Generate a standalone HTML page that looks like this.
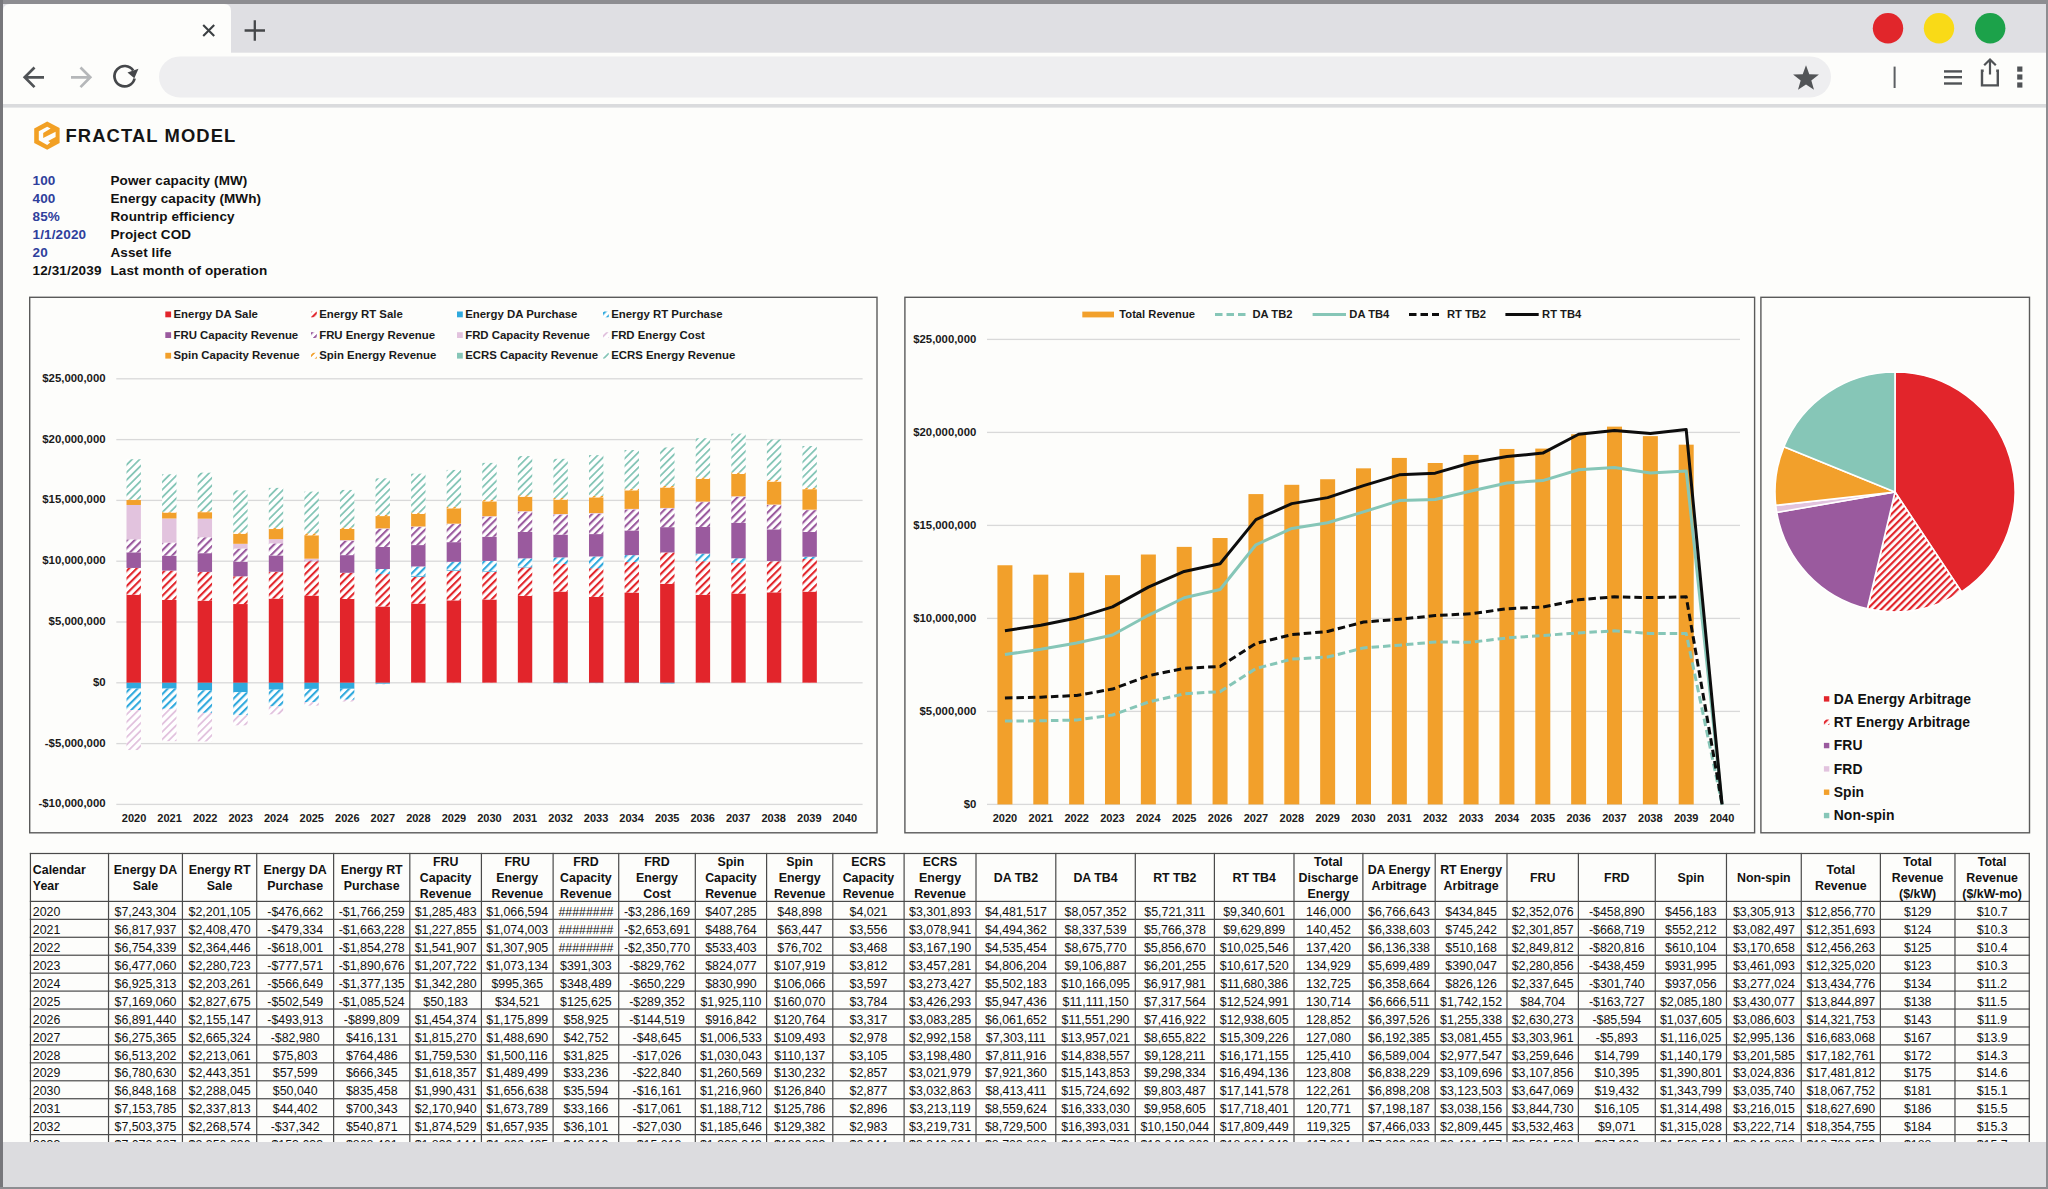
<!DOCTYPE html><html><head><meta charset="utf-8"><style>html,body{margin:0;padding:0;}body{width:2048px;height:1189px;overflow:hidden;position:relative;background:#fdfdfb;font-family:"Liberation Sans", sans-serif;}.a{position:absolute;}svg text{font-family:"Liberation Sans", sans-serif;}</style></head><body><svg class="a" style="left:0;top:0" width="2048" height="110" viewBox="0 0 2048 110"><rect x="0" y="0" width="2048" height="110" fill="#fdfdfb"/><rect x="0" y="0" width="2048" height="52.7" fill="#dfdfe3"/><path d="M3,60 V11 Q3,4 10,4 H224 Q231,4 231,11 V60 Z" fill="#fdfdfb"/><path d="M203.2,25 L214.2,36 M214.2,25 L203.2,36" stroke="#3c4043" stroke-width="2.1" fill="none"/><path d="M254.8,20.3 V40.7 M244.6,30.5 H265" stroke="#45474a" stroke-width="2.3" fill="none"/><circle cx="1888" cy="28.2" r="15.2" fill="#e1262b"/><circle cx="1939" cy="28.2" r="15.2" fill="#f9da17"/><circle cx="1990.2" cy="28.2" r="15.2" fill="#1ca24a"/><rect x="159" y="56.4" width="1672" height="41" rx="20.5" fill="#eeeef0"/><rect x="0" y="104" width="2048" height="3.6" fill="#dadbdd"/><path d="M44,77.3 H26.5 M34.5,67.5 L24.7,77.3 L34.5,87.1" stroke="#505356" stroke-width="2.7" fill="none"/><path d="M71,77.3 H88.5 M80.5,67.5 L90.3,77.3 L80.5,87.1" stroke="#b5b7b9" stroke-width="2.7" fill="none"/><path d="M133.2,70.6 A10.2,10.2 0 1 0 134.6,78.5" stroke="#45474a" stroke-width="2.7" fill="none"/><path d="M127.5,72.5 L138.5,68.7 L134.3,78.2 Z" fill="#45474a"/><polygon points="1806,65.2 1809.29,74.27 1818.93,74.6 1811.33,80.53 1813.99,89.8 1806,84.4 1798.01,89.8 1800.67,80.53 1793.07,74.6 1802.71,74.27" fill="#525457"/><rect x="1893.6" y="66.6" width="2" height="21.4" fill="#5c5f63"/><rect x="1944" y="70.2" width="18" height="2.4" fill="#505356"/><rect x="1944" y="76" width="18" height="2.4" fill="#505356"/><rect x="1944" y="82.3" width="18" height="2.4" fill="#505356"/><path d="M1983.7,70.8 H1982 V85.4 H1997.8 V70.8 H1996.2" stroke="#505356" stroke-width="2.4" fill="none"/><path d="M1990,74.5 V59.8 M1984.2,65.3 L1990,59.5 L1995.8,65.3" stroke="#505356" stroke-width="2.2" fill="none"/><rect x="2017.2" y="66.5" width="5.2" height="5.2" fill="#505356"/><rect x="2017.2" y="74.4" width="5.2" height="5.2" fill="#505356"/><rect x="2017.2" y="82.4" width="5.2" height="5.2" fill="#505356"/></svg><svg class="a" style="left:28px;top:116px" width="40" height="40" viewBox="0 0 40 40"><polygon points="19.2,5.4 31.6,12.1 31.6,26.9 19.2,33.8 6.2,26.9 6.2,12.5" fill="#f2a024"/><polygon points="19.2,10.8 22.6,12.6 15.2,16.9 15.2,21.9 27.6,15.8 27.6,20.9 20.2,24.9 22.2,26.6 19.2,29 10.8,24.2 10.8,15.2" fill="#fdfdfb"/></svg><div class="a" style="left:65.5px;top:122.8px;font-size:18.4px;font-weight:bold;letter-spacing:1.1px;color:#151515;line-height:26px;white-space:nowrap">FRACTAL MODEL</div><div class="a" style="left:32.5px;top:171.9px;font-size:13.5px;letter-spacing:0.15px;font-weight:bold;color:#2f3f9c;line-height:18px;white-space:nowrap">100</div><div class="a" style="left:110.5px;top:171.9px;font-size:13.5px;letter-spacing:0.1px;font-weight:bold;color:#111;line-height:18px;white-space:nowrap">Power capacity (MW)</div><div class="a" style="left:32.5px;top:189.85px;font-size:13.5px;letter-spacing:0.15px;font-weight:bold;color:#2f3f9c;line-height:18px;white-space:nowrap">400</div><div class="a" style="left:110.5px;top:189.85px;font-size:13.5px;letter-spacing:0.1px;font-weight:bold;color:#111;line-height:18px;white-space:nowrap">Energy capacity (MWh)</div><div class="a" style="left:32.5px;top:207.8px;font-size:13.5px;letter-spacing:0.15px;font-weight:bold;color:#2f3f9c;line-height:18px;white-space:nowrap">85%</div><div class="a" style="left:110.5px;top:207.8px;font-size:13.5px;letter-spacing:0.1px;font-weight:bold;color:#111;line-height:18px;white-space:nowrap">Rountrip efficiency</div><div class="a" style="left:32.5px;top:225.75px;font-size:13.5px;letter-spacing:0.15px;font-weight:bold;color:#2f3f9c;line-height:18px;white-space:nowrap">1/1/2020</div><div class="a" style="left:110.5px;top:225.75px;font-size:13.5px;letter-spacing:0.1px;font-weight:bold;color:#111;line-height:18px;white-space:nowrap">Project COD</div><div class="a" style="left:32.5px;top:243.7px;font-size:13.5px;letter-spacing:0.15px;font-weight:bold;color:#2f3f9c;line-height:18px;white-space:nowrap">20</div><div class="a" style="left:110.5px;top:243.7px;font-size:13.5px;letter-spacing:0.1px;font-weight:bold;color:#111;line-height:18px;white-space:nowrap">Asset life</div><div class="a" style="left:32.5px;top:261.65px;font-size:13.5px;letter-spacing:0.15px;font-weight:bold;color:#111111;line-height:18px;white-space:nowrap">12/31/2039</div><div class="a" style="left:110.5px;top:261.65px;font-size:13.5px;letter-spacing:0.1px;font-weight:bold;color:#111;line-height:18px;white-space:nowrap">Last month of operation</div><svg class="a" style="left:0;top:0" width="2048" height="850" viewBox="0 0 2048 850"><defs><pattern id="he2252b" patternUnits="userSpaceOnUse" width="5.35" height="5.35" patternTransform="rotate(45)"><rect width="5.35" height="5.35" fill="#ffffff"/><rect width="2.1" height="5.35" fill="#e2252b"/></pattern><pattern id="h2fa9dd" patternUnits="userSpaceOnUse" width="5.35" height="5.35" patternTransform="rotate(45)"><rect width="5.35" height="5.35" fill="#ffffff"/><rect width="2.1" height="5.35" fill="#2fa9dd"/></pattern><pattern id="h9a5a9e" patternUnits="userSpaceOnUse" width="5.35" height="5.35" patternTransform="rotate(45)"><rect width="5.35" height="5.35" fill="#ffffff"/><rect width="2.1" height="5.35" fill="#9a5a9e"/></pattern><pattern id="he2c3de" patternUnits="userSpaceOnUse" width="5.35" height="5.35" patternTransform="rotate(45)"><rect width="5.35" height="5.35" fill="#ffffff"/><rect width="1.8" height="5.35" fill="#e2c3de"/></pattern><pattern id="hf2a02b" patternUnits="userSpaceOnUse" width="5.35" height="5.35" patternTransform="rotate(45)"><rect width="5.35" height="5.35" fill="#ffffff"/><rect width="1.8" height="5.35" fill="#f2a02b"/></pattern><pattern id="h86c6b7" patternUnits="userSpaceOnUse" width="5.35" height="5.35" patternTransform="rotate(45)"><rect width="5.35" height="5.35" fill="#ffffff"/><rect width="1.8" height="5.35" fill="#86c6b7"/></pattern></defs><rect x="29.7" y="297.3" width="847.3" height="535.5" fill="none" stroke="#5a5a5a" stroke-width="1.4"/><rect x="116.3" y="803.75" width="746.3" height="1.3" fill="#d9d9d9"/><text x="105.6" y="807.4" text-anchor="end" font-size="11.4" font-weight="bold" fill="#1a1a1a">-$10,000,000</text><rect x="116.3" y="742.95" width="746.3" height="1.3" fill="#d9d9d9"/><text x="105.6" y="746.6" text-anchor="end" font-size="11.4" font-weight="bold" fill="#1a1a1a">-$5,000,000</text><rect x="116.3" y="682.15" width="746.3" height="1.3" fill="#d9d9d9"/><text x="105.6" y="685.8" text-anchor="end" font-size="11.4" font-weight="bold" fill="#1a1a1a">$0</text><rect x="116.3" y="621.35" width="746.3" height="1.3" fill="#d9d9d9"/><text x="105.6" y="625" text-anchor="end" font-size="11.4" font-weight="bold" fill="#1a1a1a">$5,000,000</text><rect x="116.3" y="560.55" width="746.3" height="1.3" fill="#d9d9d9"/><text x="105.6" y="564.2" text-anchor="end" font-size="11.4" font-weight="bold" fill="#1a1a1a">$10,000,000</text><rect x="116.3" y="499.75" width="746.3" height="1.3" fill="#d9d9d9"/><text x="105.6" y="503.4" text-anchor="end" font-size="11.4" font-weight="bold" fill="#1a1a1a">$15,000,000</text><rect x="116.3" y="438.95" width="746.3" height="1.3" fill="#d9d9d9"/><text x="105.6" y="442.6" text-anchor="end" font-size="11.4" font-weight="bold" fill="#1a1a1a">$20,000,000</text><rect x="116.3" y="378.15" width="746.3" height="1.3" fill="#d9d9d9"/><text x="105.6" y="381.8" text-anchor="end" font-size="11.4" font-weight="bold" fill="#1a1a1a">$25,000,000</text><text x="134.07" y="822" text-anchor="middle" font-size="11" font-weight="bold" fill="#1a1a1a">2020</text><text x="169.61" y="822" text-anchor="middle" font-size="11" font-weight="bold" fill="#1a1a1a">2021</text><text x="205.15" y="822" text-anchor="middle" font-size="11" font-weight="bold" fill="#1a1a1a">2022</text><text x="240.68" y="822" text-anchor="middle" font-size="11" font-weight="bold" fill="#1a1a1a">2023</text><text x="276.22" y="822" text-anchor="middle" font-size="11" font-weight="bold" fill="#1a1a1a">2024</text><text x="311.76" y="822" text-anchor="middle" font-size="11" font-weight="bold" fill="#1a1a1a">2025</text><text x="347.3" y="822" text-anchor="middle" font-size="11" font-weight="bold" fill="#1a1a1a">2026</text><text x="382.84" y="822" text-anchor="middle" font-size="11" font-weight="bold" fill="#1a1a1a">2027</text><text x="418.37" y="822" text-anchor="middle" font-size="11" font-weight="bold" fill="#1a1a1a">2028</text><text x="453.91" y="822" text-anchor="middle" font-size="11" font-weight="bold" fill="#1a1a1a">2029</text><text x="489.45" y="822" text-anchor="middle" font-size="11" font-weight="bold" fill="#1a1a1a">2030</text><text x="524.99" y="822" text-anchor="middle" font-size="11" font-weight="bold" fill="#1a1a1a">2031</text><text x="560.53" y="822" text-anchor="middle" font-size="11" font-weight="bold" fill="#1a1a1a">2032</text><text x="596.06" y="822" text-anchor="middle" font-size="11" font-weight="bold" fill="#1a1a1a">2033</text><text x="631.6" y="822" text-anchor="middle" font-size="11" font-weight="bold" fill="#1a1a1a">2034</text><text x="667.14" y="822" text-anchor="middle" font-size="11" font-weight="bold" fill="#1a1a1a">2035</text><text x="702.68" y="822" text-anchor="middle" font-size="11" font-weight="bold" fill="#1a1a1a">2036</text><text x="738.22" y="822" text-anchor="middle" font-size="11" font-weight="bold" fill="#1a1a1a">2037</text><text x="773.75" y="822" text-anchor="middle" font-size="11" font-weight="bold" fill="#1a1a1a">2038</text><text x="809.29" y="822" text-anchor="middle" font-size="11" font-weight="bold" fill="#1a1a1a">2039</text><text x="844.83" y="822" text-anchor="middle" font-size="11" font-weight="bold" fill="#1a1a1a">2040</text><rect x="126.5" y="594.72" width="14.4" height="88.08" fill="#e2252b"/><rect x="126.5" y="567.96" width="14.4" height="26.77" fill="url(#he2252b)"/><rect x="126.5" y="682.8" width="14.4" height="5.8" fill="#2fa9dd"/><rect x="126.5" y="688.6" width="14.4" height="21.48" fill="url(#h2fa9dd)"/><rect x="126.5" y="552.32" width="14.4" height="15.63" fill="#9a5a9e"/><rect x="126.5" y="539.35" width="14.4" height="12.97" fill="url(#h9a5a9e)"/><rect x="126.5" y="504.98" width="14.4" height="34.38" fill="#e2c3de"/><rect x="126.5" y="710.07" width="14.4" height="39.96" fill="url(#he2c3de)"/><rect x="126.5" y="500.02" width="14.4" height="4.95" fill="#f2a02b"/><rect x="126.5" y="499.43" width="14.4" height="0.59" fill="url(#hf2a02b)"/><rect x="126.5" y="459.23" width="14.4" height="40.15" fill="url(#h86c6b7)"/><rect x="162.08" y="599.89" width="14.4" height="82.91" fill="#e2252b"/><rect x="162.08" y="570.61" width="14.4" height="29.29" fill="url(#he2252b)"/><rect x="162.08" y="682.8" width="14.4" height="5.83" fill="#2fa9dd"/><rect x="162.08" y="688.63" width="14.4" height="20.22" fill="url(#h2fa9dd)"/><rect x="162.08" y="555.68" width="14.4" height="14.93" fill="#9a5a9e"/><rect x="162.08" y="542.62" width="14.4" height="13.06" fill="url(#h9a5a9e)"/><rect x="162.08" y="518.48" width="14.4" height="24.14" fill="#e2c3de"/><rect x="162.08" y="708.85" width="14.4" height="32.27" fill="url(#he2c3de)"/><rect x="162.08" y="512.54" width="14.4" height="5.94" fill="#f2a02b"/><rect x="162.08" y="511.76" width="14.4" height="0.77" fill="url(#hf2a02b)"/><rect x="162.08" y="474.28" width="14.4" height="37.44" fill="url(#h86c6b7)"/><rect x="197.65" y="600.67" width="14.4" height="82.13" fill="#e2252b"/><rect x="197.65" y="571.92" width="14.4" height="28.75" fill="url(#he2252b)"/><rect x="197.65" y="682.8" width="14.4" height="7.51" fill="#2fa9dd"/><rect x="197.65" y="690.31" width="14.4" height="22.55" fill="url(#h2fa9dd)"/><rect x="197.65" y="553.17" width="14.4" height="18.75" fill="#9a5a9e"/><rect x="197.65" y="537.26" width="14.4" height="15.9" fill="url(#h9a5a9e)"/><rect x="197.65" y="518.66" width="14.4" height="18.6" fill="#e2c3de"/><rect x="197.65" y="712.86" width="14.4" height="28.59" fill="url(#he2c3de)"/><rect x="197.65" y="512.17" width="14.4" height="6.49" fill="#f2a02b"/><rect x="197.65" y="511.24" width="14.4" height="0.93" fill="url(#hf2a02b)"/><rect x="197.65" y="472.68" width="14.4" height="38.51" fill="url(#h86c6b7)"/><rect x="233.23" y="604.04" width="14.4" height="78.76" fill="#e2252b"/><rect x="233.23" y="576.31" width="14.4" height="27.73" fill="url(#he2252b)"/><rect x="233.23" y="682.8" width="14.4" height="9.46" fill="#2fa9dd"/><rect x="233.23" y="692.26" width="14.4" height="22.99" fill="url(#h2fa9dd)"/><rect x="233.23" y="561.62" width="14.4" height="14.69" fill="#9a5a9e"/><rect x="233.23" y="548.57" width="14.4" height="13.05" fill="url(#h9a5a9e)"/><rect x="233.23" y="543.81" width="14.4" height="4.76" fill="#e2c3de"/><rect x="233.23" y="715.25" width="14.4" height="10.09" fill="url(#he2c3de)"/><rect x="233.23" y="533.79" width="14.4" height="10.02" fill="#f2a02b"/><rect x="233.23" y="532.48" width="14.4" height="1.31" fill="url(#hf2a02b)"/><rect x="233.23" y="490.39" width="14.4" height="42.04" fill="url(#h86c6b7)"/><rect x="268.8" y="598.59" width="14.4" height="84.21" fill="#e2252b"/><rect x="268.8" y="571.8" width="14.4" height="26.79" fill="url(#he2252b)"/><rect x="268.8" y="682.8" width="14.4" height="6.89" fill="#2fa9dd"/><rect x="268.8" y="689.69" width="14.4" height="16.75" fill="url(#h2fa9dd)"/><rect x="268.8" y="555.47" width="14.4" height="16.32" fill="#9a5a9e"/><rect x="268.8" y="543.37" width="14.4" height="12.1" fill="url(#h9a5a9e)"/><rect x="268.8" y="539.13" width="14.4" height="4.24" fill="#e2c3de"/><rect x="268.8" y="706.44" width="14.4" height="7.91" fill="url(#he2c3de)"/><rect x="268.8" y="529.03" width="14.4" height="10.1" fill="#f2a02b"/><rect x="268.8" y="527.74" width="14.4" height="1.29" fill="url(#hf2a02b)"/><rect x="268.8" y="487.89" width="14.4" height="39.8" fill="url(#h86c6b7)"/><rect x="304.38" y="595.62" width="14.4" height="87.18" fill="#e2252b"/><rect x="304.38" y="561.24" width="14.4" height="34.38" fill="url(#he2252b)"/><rect x="304.38" y="682.8" width="14.4" height="6.11" fill="#2fa9dd"/><rect x="304.38" y="688.91" width="14.4" height="13.2" fill="url(#h2fa9dd)"/><rect x="304.38" y="560.63" width="14.4" height="0.61" fill="#9a5a9e"/><rect x="304.38" y="560.21" width="14.4" height="0.42" fill="url(#h9a5a9e)"/><rect x="304.38" y="558.68" width="14.4" height="1.53" fill="#e2c3de"/><rect x="304.38" y="702.11" width="14.4" height="3.52" fill="url(#he2c3de)"/><rect x="304.38" y="535.27" width="14.4" height="23.41" fill="#f2a02b"/><rect x="304.38" y="533.33" width="14.4" height="1.95" fill="url(#hf2a02b)"/><rect x="304.38" y="491.62" width="14.4" height="41.66" fill="url(#h86c6b7)"/><rect x="339.96" y="599" width="14.4" height="83.8" fill="#e2252b"/><rect x="339.96" y="572.79" width="14.4" height="26.21" fill="url(#he2252b)"/><rect x="339.96" y="682.8" width="14.4" height="6.01" fill="#2fa9dd"/><rect x="339.96" y="688.81" width="14.4" height="10.94" fill="url(#h2fa9dd)"/><rect x="339.96" y="555.11" width="14.4" height="17.69" fill="#9a5a9e"/><rect x="339.96" y="540.81" width="14.4" height="14.3" fill="url(#h9a5a9e)"/><rect x="339.96" y="540.09" width="14.4" height="0.72" fill="#e2c3de"/><rect x="339.96" y="699.75" width="14.4" height="1.76" fill="url(#he2c3de)"/><rect x="339.96" y="528.94" width="14.4" height="11.15" fill="#f2a02b"/><rect x="339.96" y="527.48" width="14.4" height="1.47" fill="url(#hf2a02b)"/><rect x="339.96" y="489.94" width="14.4" height="37.49" fill="url(#h86c6b7)"/><rect x="375.53" y="606.49" width="14.4" height="76.31" fill="#e2252b"/><rect x="375.53" y="574.08" width="14.4" height="32.41" fill="url(#he2252b)"/><rect x="375.53" y="682.8" width="14.4" height="1.01" fill="#2fa9dd"/><rect x="375.53" y="569.02" width="14.4" height="5.06" fill="url(#h2fa9dd)"/><rect x="375.53" y="546.95" width="14.4" height="22.07" fill="#9a5a9e"/><rect x="375.53" y="528.84" width="14.4" height="18.1" fill="url(#h9a5a9e)"/><rect x="375.53" y="528.33" width="14.4" height="0.52" fill="#e2c3de"/><rect x="375.53" y="683.81" width="14.4" height="0.59" fill="url(#he2c3de)"/><rect x="375.53" y="516.09" width="14.4" height="12.24" fill="#f2a02b"/><rect x="375.53" y="514.75" width="14.4" height="1.33" fill="url(#hf2a02b)"/><rect x="375.53" y="478.33" width="14.4" height="36.38" fill="url(#h86c6b7)"/><rect x="411.11" y="603.6" width="14.4" height="79.2" fill="#e2252b"/><rect x="411.11" y="576.69" width="14.4" height="26.91" fill="url(#he2252b)"/><rect x="411.11" y="575.77" width="14.4" height="0.92" fill="#2fa9dd"/><rect x="411.11" y="566.47" width="14.4" height="9.3" fill="url(#h2fa9dd)"/><rect x="411.11" y="545.07" width="14.4" height="21.4" fill="#9a5a9e"/><rect x="411.11" y="526.83" width="14.4" height="18.24" fill="url(#h9a5a9e)"/><rect x="411.11" y="526.45" width="14.4" height="0.39" fill="#e2c3de"/><rect x="411.11" y="682.8" width="14.4" height="0.21" fill="url(#he2c3de)"/><rect x="411.11" y="513.92" width="14.4" height="12.53" fill="#f2a02b"/><rect x="411.11" y="512.58" width="14.4" height="1.34" fill="url(#hf2a02b)"/><rect x="411.11" y="473.65" width="14.4" height="38.89" fill="url(#h86c6b7)"/><rect x="446.68" y="600.35" width="14.4" height="82.45" fill="#e2252b"/><rect x="446.68" y="570.64" width="14.4" height="29.71" fill="url(#he2252b)"/><rect x="446.68" y="569.94" width="14.4" height="0.7" fill="#2fa9dd"/><rect x="446.68" y="561.83" width="14.4" height="8.1" fill="url(#h2fa9dd)"/><rect x="446.68" y="542.15" width="14.4" height="19.68" fill="#9a5a9e"/><rect x="446.68" y="524.04" width="14.4" height="18.11" fill="url(#h9a5a9e)"/><rect x="446.68" y="523.64" width="14.4" height="0.4" fill="#e2c3de"/><rect x="446.68" y="682.8" width="14.4" height="0.28" fill="url(#he2c3de)"/><rect x="446.68" y="508.31" width="14.4" height="15.33" fill="#f2a02b"/><rect x="446.68" y="506.73" width="14.4" height="1.58" fill="url(#hf2a02b)"/><rect x="446.68" y="469.94" width="14.4" height="36.75" fill="url(#h86c6b7)"/><rect x="482.26" y="599.53" width="14.4" height="83.27" fill="#e2252b"/><rect x="482.26" y="571.7" width="14.4" height="27.82" fill="url(#he2252b)"/><rect x="482.26" y="571.1" width="14.4" height="0.61" fill="#2fa9dd"/><rect x="482.26" y="560.94" width="14.4" height="10.16" fill="url(#h2fa9dd)"/><rect x="482.26" y="536.73" width="14.4" height="24.2" fill="#9a5a9e"/><rect x="482.26" y="516.59" width="14.4" height="20.14" fill="url(#h9a5a9e)"/><rect x="482.26" y="516.15" width="14.4" height="0.43" fill="#e2c3de"/><rect x="482.26" y="682.8" width="14.4" height="0.2" fill="url(#he2c3de)"/><rect x="482.26" y="501.36" width="14.4" height="14.8" fill="#f2a02b"/><rect x="482.26" y="499.81" width="14.4" height="1.54" fill="url(#hf2a02b)"/><rect x="482.26" y="462.9" width="14.4" height="36.88" fill="url(#h86c6b7)"/><rect x="517.84" y="595.81" width="14.4" height="86.99" fill="#e2252b"/><rect x="517.84" y="567.38" width="14.4" height="28.43" fill="url(#he2252b)"/><rect x="517.84" y="566.84" width="14.4" height="0.54" fill="#2fa9dd"/><rect x="517.84" y="558.33" width="14.4" height="8.52" fill="url(#h2fa9dd)"/><rect x="517.84" y="531.93" width="14.4" height="26.4" fill="#9a5a9e"/><rect x="517.84" y="511.57" width="14.4" height="20.35" fill="url(#h9a5a9e)"/><rect x="517.84" y="511.17" width="14.4" height="0.4" fill="#e2c3de"/><rect x="517.84" y="682.8" width="14.4" height="0.21" fill="url(#he2c3de)"/><rect x="517.84" y="496.72" width="14.4" height="14.45" fill="#f2a02b"/><rect x="517.84" y="495.19" width="14.4" height="1.53" fill="url(#hf2a02b)"/><rect x="517.84" y="456.08" width="14.4" height="39.07" fill="url(#h86c6b7)"/><rect x="553.41" y="591.56" width="14.4" height="91.24" fill="#e2252b"/><rect x="553.41" y="563.97" width="14.4" height="27.59" fill="url(#he2252b)"/><rect x="553.41" y="682.8" width="14.4" height="0.45" fill="#2fa9dd"/><rect x="553.41" y="557.4" width="14.4" height="6.58" fill="url(#h2fa9dd)"/><rect x="553.41" y="534.6" width="14.4" height="22.79" fill="#9a5a9e"/><rect x="553.41" y="514.44" width="14.4" height="20.16" fill="url(#h9a5a9e)"/><rect x="553.41" y="514" width="14.4" height="0.44" fill="#e2c3de"/><rect x="553.41" y="683.25" width="14.4" height="0.33" fill="url(#he2c3de)"/><rect x="553.41" y="499.58" width="14.4" height="14.42" fill="#f2a02b"/><rect x="553.41" y="498.01" width="14.4" height="1.57" fill="url(#hf2a02b)"/><rect x="553.41" y="458.82" width="14.4" height="39.15" fill="url(#h86c6b7)"/><rect x="588.99" y="596.83" width="14.4" height="85.97" fill="#e2252b"/><rect x="588.99" y="568.25" width="14.4" height="28.58" fill="url(#he2252b)"/><rect x="588.99" y="682.8" width="14.4" height="0.24" fill="#2fa9dd"/><rect x="588.99" y="556.46" width="14.4" height="11.8" fill="url(#h2fa9dd)"/><rect x="588.99" y="534.08" width="14.4" height="22.37" fill="#9a5a9e"/><rect x="588.99" y="513.53" width="14.4" height="20.55" fill="url(#h9a5a9e)"/><rect x="588.99" y="513.05" width="14.4" height="0.49" fill="#e2c3de"/><rect x="588.99" y="683.04" width="14.4" height="0.18" fill="url(#he2c3de)"/><rect x="588.99" y="497.36" width="14.4" height="15.69" fill="#f2a02b"/><rect x="588.99" y="495.78" width="14.4" height="1.58" fill="url(#hf2a02b)"/><rect x="588.99" y="455.13" width="14.4" height="40.61" fill="url(#h86c6b7)"/><rect x="624.56" y="592.57" width="14.4" height="90.23" fill="#e2252b"/><rect x="624.56" y="562.05" width="14.4" height="30.52" fill="url(#he2252b)"/><rect x="624.56" y="682.8" width="14.4" height="0.24" fill="#2fa9dd"/><rect x="624.56" y="555.12" width="14.4" height="6.93" fill="url(#h2fa9dd)"/><rect x="624.56" y="530.44" width="14.4" height="24.68" fill="#9a5a9e"/><rect x="624.56" y="509.4" width="14.4" height="21.04" fill="url(#h9a5a9e)"/><rect x="624.56" y="508.91" width="14.4" height="0.49" fill="#e2c3de"/><rect x="624.56" y="683.04" width="14.4" height="0.18" fill="url(#he2c3de)"/><rect x="624.56" y="490.31" width="14.4" height="18.6" fill="#f2a02b"/><rect x="624.56" y="488.73" width="14.4" height="1.58" fill="url(#hf2a02b)"/><rect x="624.56" y="450.02" width="14.4" height="38.67" fill="url(#h86c6b7)"/><rect x="660.14" y="583.82" width="14.4" height="98.98" fill="#e2252b"/><rect x="660.14" y="552.44" width="14.4" height="31.37" fill="url(#he2252b)"/><rect x="660.14" y="682.8" width="14.4" height="0.73" fill="#2fa9dd"/><rect x="660.14" y="527.15" width="14.4" height="25.29" fill="#9a5a9e"/><rect x="660.14" y="508.43" width="14.4" height="18.73" fill="url(#h9a5a9e)"/><rect x="660.14" y="507.94" width="14.4" height="0.49" fill="#e2c3de"/><rect x="660.14" y="683.53" width="14.4" height="0.18" fill="url(#he2c3de)"/><rect x="660.14" y="487.51" width="14.4" height="20.43" fill="#f2a02b"/><rect x="660.14" y="485.93" width="14.4" height="1.58" fill="url(#hf2a02b)"/><rect x="660.14" y="447.47" width="14.4" height="38.43" fill="url(#h86c6b7)"/><rect x="695.72" y="594.76" width="14.4" height="88.04" fill="#e2252b"/><rect x="695.72" y="561.2" width="14.4" height="33.56" fill="url(#he2252b)"/><rect x="695.72" y="561.08" width="14.4" height="0.12" fill="#2fa9dd"/><rect x="695.72" y="553.66" width="14.4" height="7.42" fill="url(#h2fa9dd)"/><rect x="695.72" y="526.91" width="14.4" height="26.75" fill="#9a5a9e"/><rect x="695.72" y="502.1" width="14.4" height="24.81" fill="url(#h9a5a9e)"/><rect x="695.72" y="501.62" width="14.4" height="0.49" fill="#e2c3de"/><rect x="695.72" y="682.8" width="14.4" height="0.18" fill="url(#he2c3de)"/><rect x="695.72" y="478.88" width="14.4" height="22.74" fill="#f2a02b"/><rect x="695.72" y="477.3" width="14.4" height="1.58" fill="url(#hf2a02b)"/><rect x="695.72" y="438.23" width="14.4" height="39.03" fill="url(#h86c6b7)"/><rect x="731.29" y="593.55" width="14.4" height="89.25" fill="#e2252b"/><rect x="731.29" y="563.02" width="14.4" height="30.52" fill="url(#he2252b)"/><rect x="731.29" y="562.9" width="14.4" height="0.12" fill="#2fa9dd"/><rect x="731.29" y="558.28" width="14.4" height="4.62" fill="url(#h2fa9dd)"/><rect x="731.29" y="522.77" width="14.4" height="35.51" fill="#9a5a9e"/><rect x="731.29" y="496.75" width="14.4" height="26.02" fill="url(#h9a5a9e)"/><rect x="731.29" y="496.27" width="14.4" height="0.49" fill="#e2c3de"/><rect x="731.29" y="682.8" width="14.4" height="0.18" fill="url(#he2c3de)"/><rect x="731.29" y="474.01" width="14.4" height="22.25" fill="#f2a02b"/><rect x="731.29" y="472.43" width="14.4" height="1.58" fill="url(#hf2a02b)"/><rect x="731.29" y="433.61" width="14.4" height="38.79" fill="url(#h86c6b7)"/><rect x="766.87" y="592.33" width="14.4" height="90.47" fill="#e2252b"/><rect x="766.87" y="561.32" width="14.4" height="31.01" fill="url(#he2252b)"/><rect x="766.87" y="561.08" width="14.4" height="0.24" fill="url(#h2fa9dd)"/><rect x="766.87" y="529.34" width="14.4" height="31.74" fill="#9a5a9e"/><rect x="766.87" y="505.02" width="14.4" height="24.32" fill="url(#h9a5a9e)"/><rect x="766.87" y="504.53" width="14.4" height="0.49" fill="#e2c3de"/><rect x="766.87" y="682.8" width="14.4" height="0.18" fill="url(#he2c3de)"/><rect x="766.87" y="481.55" width="14.4" height="22.98" fill="#f2a02b"/><rect x="766.87" y="479.97" width="14.4" height="1.58" fill="url(#hf2a02b)"/><rect x="766.87" y="439.56" width="14.4" height="40.37" fill="url(#h86c6b7)"/><rect x="802.44" y="591.6" width="14.4" height="91.2" fill="#e2252b"/><rect x="802.44" y="559.01" width="14.4" height="32.59" fill="url(#he2252b)"/><rect x="802.44" y="556.7" width="14.4" height="2.31" fill="url(#h2fa9dd)"/><rect x="802.44" y="531.89" width="14.4" height="24.81" fill="#9a5a9e"/><rect x="802.44" y="510.13" width="14.4" height="21.77" fill="url(#h9a5a9e)"/><rect x="802.44" y="509.64" width="14.4" height="0.49" fill="#e2c3de"/><rect x="802.44" y="682.8" width="14.4" height="0.18" fill="url(#he2c3de)"/><rect x="802.44" y="489.21" width="14.4" height="20.43" fill="#f2a02b"/><rect x="802.44" y="487.63" width="14.4" height="1.58" fill="url(#hf2a02b)"/><rect x="802.44" y="446.01" width="14.4" height="41.59" fill="url(#h86c6b7)"/><rect x="165.3" y="311.5" width="5.8" height="5.8" fill="#e2252b"/><text x="173.5" y="318" font-size="11.4" font-weight="bold" fill="#1a1a1a">Energy DA Sale</text><rect x="311" y="311.5" width="5.8" height="5.8" fill="url(#he2252b)"/><text x="319.2" y="318" font-size="11.4" font-weight="bold" fill="#1a1a1a">Energy RT Sale</text><rect x="457" y="311.5" width="5.8" height="5.8" fill="#2fa9dd"/><text x="465.2" y="318" font-size="11.4" font-weight="bold" fill="#1a1a1a">Energy DA Purchase</text><rect x="603" y="311.5" width="5.8" height="5.8" fill="url(#h2fa9dd)"/><text x="611.2" y="318" font-size="11.4" font-weight="bold" fill="#1a1a1a">Energy RT Purchase</text><rect x="165.3" y="332.2" width="5.8" height="5.8" fill="#9a5a9e"/><text x="173.5" y="338.7" font-size="11.4" font-weight="bold" fill="#1a1a1a">FRU Capacity Revenue</text><rect x="311" y="332.2" width="5.8" height="5.8" fill="url(#h9a5a9e)"/><text x="319.2" y="338.7" font-size="11.4" font-weight="bold" fill="#1a1a1a">FRU Energy Revenue</text><rect x="457" y="332.2" width="5.8" height="5.8" fill="#e2c3de"/><text x="465.2" y="338.7" font-size="11.4" font-weight="bold" fill="#1a1a1a">FRD Capacity Revenue</text><rect x="603" y="332.2" width="5.8" height="5.8" fill="url(#he2c3de)"/><text x="611.2" y="338.7" font-size="11.4" font-weight="bold" fill="#1a1a1a">FRD Energy Cost</text><rect x="165.3" y="352.8" width="5.8" height="5.8" fill="#f2a02b"/><text x="173.5" y="359.3" font-size="11.4" font-weight="bold" fill="#1a1a1a">Spin Capacity Revenue</text><rect x="311" y="352.8" width="5.8" height="5.8" fill="url(#hf2a02b)"/><text x="319.2" y="359.3" font-size="11.4" font-weight="bold" fill="#1a1a1a">Spin Energy Revenue</text><rect x="457" y="352.8" width="5.8" height="5.8" fill="#86c6b7"/><text x="465.2" y="359.3" font-size="11.4" font-weight="bold" fill="#1a1a1a">ECRS Capacity Revenue</text><rect x="603" y="352.8" width="5.8" height="5.8" fill="url(#h86c6b7)"/><text x="611.2" y="359.3" font-size="11.4" font-weight="bold" fill="#1a1a1a">ECRS Energy Revenue</text></svg><svg class="a" style="left:0;top:0" width="2048" height="850" viewBox="0 0 2048 850"><rect x="904.9" y="297.3" width="849.7" height="535.5" fill="none" stroke="#5a5a5a" stroke-width="1.4"/><rect x="987" y="803.75" width="753" height="1.3" fill="#d9d9d9"/><text x="976.3" y="807.5" text-anchor="end" font-size="11.35" font-weight="bold" fill="#1a1a1a">$0</text><rect x="987" y="710.75" width="753" height="1.3" fill="#d9d9d9"/><text x="976.3" y="714.5" text-anchor="end" font-size="11.35" font-weight="bold" fill="#1a1a1a">$5,000,000</text><rect x="987" y="617.75" width="753" height="1.3" fill="#d9d9d9"/><text x="976.3" y="621.5" text-anchor="end" font-size="11.35" font-weight="bold" fill="#1a1a1a">$10,000,000</text><rect x="987" y="524.75" width="753" height="1.3" fill="#d9d9d9"/><text x="976.3" y="528.5" text-anchor="end" font-size="11.35" font-weight="bold" fill="#1a1a1a">$15,000,000</text><rect x="987" y="431.75" width="753" height="1.3" fill="#d9d9d9"/><text x="976.3" y="435.5" text-anchor="end" font-size="11.35" font-weight="bold" fill="#1a1a1a">$20,000,000</text><rect x="987" y="338.75" width="753" height="1.3" fill="#d9d9d9"/><text x="976.3" y="342.5" text-anchor="end" font-size="11.35" font-weight="bold" fill="#1a1a1a">$25,000,000</text><text x="1004.93" y="821.6" text-anchor="middle" font-size="11" font-weight="bold" fill="#1a1a1a">2020</text><text x="1040.79" y="821.6" text-anchor="middle" font-size="11" font-weight="bold" fill="#1a1a1a">2021</text><text x="1076.64" y="821.6" text-anchor="middle" font-size="11" font-weight="bold" fill="#1a1a1a">2022</text><text x="1112.5" y="821.6" text-anchor="middle" font-size="11" font-weight="bold" fill="#1a1a1a">2023</text><text x="1148.36" y="821.6" text-anchor="middle" font-size="11" font-weight="bold" fill="#1a1a1a">2024</text><text x="1184.21" y="821.6" text-anchor="middle" font-size="11" font-weight="bold" fill="#1a1a1a">2025</text><text x="1220.07" y="821.6" text-anchor="middle" font-size="11" font-weight="bold" fill="#1a1a1a">2026</text><text x="1255.93" y="821.6" text-anchor="middle" font-size="11" font-weight="bold" fill="#1a1a1a">2027</text><text x="1291.79" y="821.6" text-anchor="middle" font-size="11" font-weight="bold" fill="#1a1a1a">2028</text><text x="1327.64" y="821.6" text-anchor="middle" font-size="11" font-weight="bold" fill="#1a1a1a">2029</text><text x="1363.5" y="821.6" text-anchor="middle" font-size="11" font-weight="bold" fill="#1a1a1a">2030</text><text x="1399.36" y="821.6" text-anchor="middle" font-size="11" font-weight="bold" fill="#1a1a1a">2031</text><text x="1435.21" y="821.6" text-anchor="middle" font-size="11" font-weight="bold" fill="#1a1a1a">2032</text><text x="1471.07" y="821.6" text-anchor="middle" font-size="11" font-weight="bold" fill="#1a1a1a">2033</text><text x="1506.93" y="821.6" text-anchor="middle" font-size="11" font-weight="bold" fill="#1a1a1a">2034</text><text x="1542.79" y="821.6" text-anchor="middle" font-size="11" font-weight="bold" fill="#1a1a1a">2035</text><text x="1578.64" y="821.6" text-anchor="middle" font-size="11" font-weight="bold" fill="#1a1a1a">2036</text><text x="1614.5" y="821.6" text-anchor="middle" font-size="11" font-weight="bold" fill="#1a1a1a">2037</text><text x="1650.36" y="821.6" text-anchor="middle" font-size="11" font-weight="bold" fill="#1a1a1a">2038</text><text x="1686.21" y="821.6" text-anchor="middle" font-size="11" font-weight="bold" fill="#1a1a1a">2039</text><text x="1722.07" y="821.6" text-anchor="middle" font-size="11" font-weight="bold" fill="#1a1a1a">2040</text><rect x="997.43" y="565.26" width="15" height="239.14" fill="#f2a02b"/><rect x="1033.29" y="574.66" width="15" height="229.74" fill="#f2a02b"/><rect x="1069.14" y="572.71" width="15" height="231.69" fill="#f2a02b"/><rect x="1105" y="575.15" width="15" height="229.25" fill="#f2a02b"/><rect x="1140.86" y="554.51" width="15" height="249.89" fill="#f2a02b"/><rect x="1176.71" y="546.88" width="15" height="257.52" fill="#f2a02b"/><rect x="1212.57" y="538.02" width="15" height="266.38" fill="#f2a02b"/><rect x="1248.43" y="494.09" width="15" height="310.31" fill="#f2a02b"/><rect x="1284.29" y="484.8" width="15" height="319.6" fill="#f2a02b"/><rect x="1320.14" y="479.24" width="15" height="325.16" fill="#f2a02b"/><rect x="1356" y="468.34" width="15" height="336.06" fill="#f2a02b"/><rect x="1391.86" y="457.92" width="15" height="346.48" fill="#f2a02b"/><rect x="1427.71" y="463" width="15" height="341.4" fill="#f2a02b"/><rect x="1463.57" y="454.91" width="15" height="349.49" fill="#f2a02b"/><rect x="1499.43" y="448.95" width="15" height="355.45" fill="#f2a02b"/><rect x="1535.29" y="448.58" width="15" height="355.82" fill="#f2a02b"/><rect x="1571.14" y="434.26" width="15" height="370.14" fill="#f2a02b"/><rect x="1607" y="426.63" width="15" height="377.77" fill="#f2a02b"/><rect x="1642.86" y="436.12" width="15" height="368.28" fill="#f2a02b"/><rect x="1678.71" y="444.68" width="15" height="359.72" fill="#f2a02b"/><polyline points="1004.93,721.04 1040.79,720.8 1076.64,720.04 1112.5,715 1148.36,702.06 1184.21,693.78 1220.07,691.65 1255.93,668.56 1291.79,659.1 1327.64,657.06 1363.5,647.91 1399.36,645.19 1435.21,642.03 1471.07,642.21 1506.93,637.93 1542.79,635.51 1578.64,632.91 1614.5,630.86 1650.36,633.47 1686.21,633.47 1722.07,804.4" fill="none" stroke="#86c6b7" stroke-width="3" stroke-dasharray="7.5,4" stroke-linejoin="round"/><polyline points="1004.93,654.53 1040.79,649.32 1076.64,643.03 1112.5,635.01 1148.36,615.31 1184.21,597.73 1220.07,589.55 1255.93,544.8 1291.79,528.4 1327.64,522.72 1363.5,511.92 1399.36,500.61 1435.21,499.49 1471.07,490.99 1506.93,482.99 1542.79,480.57 1578.64,469.79 1614.5,467.55 1650.36,472.95 1686.21,470.9 1722.07,804.4" fill="none" stroke="#86c6b7" stroke-width="3" stroke-linejoin="round"/><polyline points="1004.93,697.98 1040.79,697.15 1076.64,695.47 1112.5,689.06 1148.36,675.73 1184.21,668.29 1220.07,666.45 1255.93,643.4 1291.79,634.62 1327.64,631.45 1363.5,622.06 1399.36,619.17 1435.21,615.61 1471.07,613.75 1506.93,608.73 1542.79,607.05 1578.64,599.8 1614.5,596.82 1650.36,597.57 1686.21,596.82 1722.07,804.4" fill="none" stroke="#0d0d0d" stroke-width="3" stroke-dasharray="7.5,4" stroke-linejoin="round"/><polyline points="1004.93,630.66 1040.79,625.28 1076.64,617.92 1112.5,606.91 1148.36,587.14 1184.21,571.44 1220.07,563.74 1255.93,519.65 1291.79,503.62 1327.64,497.61 1363.5,485.57 1399.36,474.84 1435.21,473.14 1471.07,462.72 1506.93,456.58 1542.79,453.05 1578.64,434.26 1614.5,430.54 1650.36,433.52 1686.21,429.61 1722.07,804.4" fill="none" stroke="#0d0d0d" stroke-width="3" stroke-linejoin="round"/><rect x="1082.3" y="311.6" width="31.7" height="5.8" fill="#f2a02b"/><text x="1119.3" y="318" font-size="11.2" font-weight="bold" fill="#1a1a1a">Total Revenue</text><path d="M1215,314.5 H1246" stroke="#86c6b7" stroke-width="3" stroke-dasharray="7.5,4"/><text x="1252.5" y="318" font-size="11.2" font-weight="bold" fill="#1a1a1a">DA TB2</text><path d="M1312.6,314.5 H1346" stroke="#86c6b7" stroke-width="3"/><text x="1349.3" y="318" font-size="11.2" font-weight="bold" fill="#1a1a1a">DA TB4</text><path d="M1409,314.5 H1439" stroke="#0d0d0d" stroke-width="3" stroke-dasharray="7.5,4"/><text x="1446.9" y="318" font-size="11.2" font-weight="bold" fill="#1a1a1a">RT TB2</text><path d="M1505.4,314.5 H1538.7" stroke="#0d0d0d" stroke-width="3"/><text x="1542.1" y="318" font-size="11.2" font-weight="bold" fill="#1a1a1a">RT TB4</text></svg><svg class="a" style="left:0;top:0" width="2048" height="850" viewBox="0 0 2048 850"><defs><pattern id="phe2252b" patternUnits="userSpaceOnUse" width="5" height="5" patternTransform="rotate(45)"><rect width="5" height="5" fill="#ffffff"/><rect width="2.2" height="5" fill="#e2252b"/></pattern></defs><rect x="1760.9" y="297.3" width="268.6" height="535.5" fill="none" stroke="#5a5a5a" stroke-width="1.4"/><path d="M1895,492 L1895,372 A120,120 0 0 1 1961.58,591.83 Z" fill="#e2252b" stroke="#ffffff" stroke-width="1.6" stroke-linejoin="round"/><path d="M1895,492 L1961.58,591.83 A120,120 0 0 1 1867.39,608.78 Z" fill="url(#phe2252b)" stroke="#ffffff" stroke-width="1.6" stroke-linejoin="round"/><path d="M1895,492 L1867.39,608.78 A120,120 0 0 1 1776.75,512.43 Z" fill="#9a5a9e" stroke="#ffffff" stroke-width="1.6" stroke-linejoin="round"/><path d="M1895,492 L1776.75,512.43 A120,120 0 0 1 1775.75,505.38 Z" fill="#e2c3de" stroke="#ffffff" stroke-width="1.6" stroke-linejoin="round"/><path d="M1895,492 L1775.75,505.38 A120,120 0 0 1 1783.9,446.66 Z" fill="#f2a02b" stroke="#ffffff" stroke-width="1.6" stroke-linejoin="round"/><path d="M1895,492 L1783.9,446.66 A120,120 0 0 1 1895,372 Z" fill="#86c6b7" stroke="#ffffff" stroke-width="1.6" stroke-linejoin="round"/><rect x="1823.9" y="696.2" width="5.4" height="5.4" fill="#e2252b"/><text x="1833.7" y="703.8" font-size="13.9" font-weight="bold" letter-spacing="0.1" fill="#111">DA Energy Arbitrage</text><rect x="1823.9" y="719.53" width="5.4" height="5.4" fill="url(#phe2252b)"/><text x="1833.7" y="727.13" font-size="13.9" font-weight="bold" letter-spacing="0.1" fill="#111">RT Energy Arbitrage</text><rect x="1823.9" y="742.86" width="5.4" height="5.4" fill="#9a5a9e"/><text x="1833.7" y="750.46" font-size="13.9" font-weight="bold" letter-spacing="0.1" fill="#111">FRU</text><rect x="1823.9" y="766.19" width="5.4" height="5.4" fill="#e2c3de"/><text x="1833.7" y="773.79" font-size="13.9" font-weight="bold" letter-spacing="0.1" fill="#111">FRD</text><rect x="1823.9" y="789.52" width="5.4" height="5.4" fill="#f2a02b"/><text x="1833.7" y="797.12" font-size="13.9" font-weight="bold" letter-spacing="0.1" fill="#111">Spin</text><rect x="1823.9" y="812.85" width="5.4" height="5.4" fill="#86c6b7"/><text x="1833.7" y="820.45" font-size="13.9" font-weight="bold" letter-spacing="0.1" fill="#111">Non-spin</text></svg><svg class="a" style="left:0;top:840px" width="2048" height="301.9" viewBox="0 840 2048 301.9"><rect x="0" y="840" width="2048" height="400" fill="#fdfdfb"/><rect x="29.8" y="852.9" width="1.2" height="298.4" fill="#4a4a4a"/><rect x="107.9" y="852.9" width="1.2" height="298.4" fill="#4a4a4a"/><rect x="181.8" y="852.9" width="1.2" height="298.4" fill="#4a4a4a"/><rect x="256.1" y="852.9" width="1.2" height="298.4" fill="#4a4a4a"/><rect x="333" y="852.9" width="1.2" height="298.4" fill="#4a4a4a"/><rect x="409.2" y="852.9" width="1.2" height="298.4" fill="#4a4a4a"/><rect x="480.8" y="852.9" width="1.2" height="298.4" fill="#4a4a4a"/><rect x="552.5" y="852.9" width="1.2" height="298.4" fill="#4a4a4a"/><rect x="618.1" y="852.9" width="1.2" height="298.4" fill="#4a4a4a"/><rect x="694.7" y="852.9" width="1.2" height="298.4" fill="#4a4a4a"/><rect x="766" y="852.9" width="1.2" height="298.4" fill="#4a4a4a"/><rect x="832.2" y="852.9" width="1.2" height="298.4" fill="#4a4a4a"/><rect x="903.5" y="852.9" width="1.2" height="298.4" fill="#4a4a4a"/><rect x="975.4" y="852.9" width="1.2" height="298.4" fill="#4a4a4a"/><rect x="1055.2" y="852.9" width="1.2" height="298.4" fill="#4a4a4a"/><rect x="1134.7" y="852.9" width="1.2" height="298.4" fill="#4a4a4a"/><rect x="1213.8" y="852.9" width="1.2" height="298.4" fill="#4a4a4a"/><rect x="1293.4" y="852.9" width="1.2" height="298.4" fill="#4a4a4a"/><rect x="1362.3" y="852.9" width="1.2" height="298.4" fill="#4a4a4a"/><rect x="1434.6" y="852.9" width="1.2" height="298.4" fill="#4a4a4a"/><rect x="1506.4" y="852.9" width="1.2" height="298.4" fill="#4a4a4a"/><rect x="1577.8" y="852.9" width="1.2" height="298.4" fill="#4a4a4a"/><rect x="1654.7" y="852.9" width="1.2" height="298.4" fill="#4a4a4a"/><rect x="1725.9" y="852.9" width="1.2" height="298.4" fill="#4a4a4a"/><rect x="1800.7" y="852.9" width="1.2" height="298.4" fill="#4a4a4a"/><rect x="1879.8" y="852.9" width="1.2" height="298.4" fill="#4a4a4a"/><rect x="1954.4" y="852.9" width="1.2" height="298.4" fill="#4a4a4a"/><rect x="2028.7" y="852.9" width="1.2" height="298.4" fill="#4a4a4a"/><rect x="29.8" y="852.9" width="2000.1" height="1.2" fill="#4a4a4a"/><rect x="29.8" y="900.8" width="2000.1" height="1.2" fill="#4a4a4a"/><rect x="29.8" y="918.74" width="2000.1" height="1.2" fill="#4a4a4a"/><rect x="29.8" y="936.68" width="2000.1" height="1.2" fill="#4a4a4a"/><rect x="29.8" y="954.62" width="2000.1" height="1.2" fill="#4a4a4a"/><rect x="29.8" y="972.56" width="2000.1" height="1.2" fill="#4a4a4a"/><rect x="29.8" y="990.5" width="2000.1" height="1.2" fill="#4a4a4a"/><rect x="29.8" y="1008.44" width="2000.1" height="1.2" fill="#4a4a4a"/><rect x="29.8" y="1026.38" width="2000.1" height="1.2" fill="#4a4a4a"/><rect x="29.8" y="1044.32" width="2000.1" height="1.2" fill="#4a4a4a"/><rect x="29.8" y="1062.26" width="2000.1" height="1.2" fill="#4a4a4a"/><rect x="29.8" y="1080.2" width="2000.1" height="1.2" fill="#4a4a4a"/><rect x="29.8" y="1098.14" width="2000.1" height="1.2" fill="#4a4a4a"/><rect x="29.8" y="1116.08" width="2000.1" height="1.2" fill="#4a4a4a"/><rect x="29.8" y="1134.02" width="2000.1" height="1.2" fill="#4a4a4a"/><rect x="29.8" y="1151.96" width="2000.1" height="1.2" fill="#4a4a4a"/><text x="32.8" y="874.4" font-size="12.4" font-weight="bold" fill="#111">Calendar</text><text x="32.8" y="890.3" font-size="12.4" font-weight="bold" fill="#111">Year</text><text x="145.45" y="874.4" text-anchor="middle" font-size="12.4" font-weight="bold" fill="#111">Energy DA</text><text x="145.45" y="890.3" text-anchor="middle" font-size="12.4" font-weight="bold" fill="#111">Sale</text><text x="219.55" y="874.4" text-anchor="middle" font-size="12.4" font-weight="bold" fill="#111">Energy RT</text><text x="219.55" y="890.3" text-anchor="middle" font-size="12.4" font-weight="bold" fill="#111">Sale</text><text x="295.15" y="874.4" text-anchor="middle" font-size="12.4" font-weight="bold" fill="#111">Energy DA</text><text x="295.15" y="890.3" text-anchor="middle" font-size="12.4" font-weight="bold" fill="#111">Purchase</text><text x="371.7" y="874.4" text-anchor="middle" font-size="12.4" font-weight="bold" fill="#111">Energy RT</text><text x="371.7" y="890.3" text-anchor="middle" font-size="12.4" font-weight="bold" fill="#111">Purchase</text><text x="445.6" y="866.45" text-anchor="middle" font-size="12.4" font-weight="bold" fill="#111">FRU</text><text x="445.6" y="882.35" text-anchor="middle" font-size="12.4" font-weight="bold" fill="#111">Capacity</text><text x="445.6" y="898.25" text-anchor="middle" font-size="12.4" font-weight="bold" fill="#111">Revenue</text><text x="517.25" y="866.45" text-anchor="middle" font-size="12.4" font-weight="bold" fill="#111">FRU</text><text x="517.25" y="882.35" text-anchor="middle" font-size="12.4" font-weight="bold" fill="#111">Energy</text><text x="517.25" y="898.25" text-anchor="middle" font-size="12.4" font-weight="bold" fill="#111">Revenue</text><text x="585.9" y="866.45" text-anchor="middle" font-size="12.4" font-weight="bold" fill="#111">FRD</text><text x="585.9" y="882.35" text-anchor="middle" font-size="12.4" font-weight="bold" fill="#111">Capacity</text><text x="585.9" y="898.25" text-anchor="middle" font-size="12.4" font-weight="bold" fill="#111">Revenue</text><text x="657" y="866.45" text-anchor="middle" font-size="12.4" font-weight="bold" fill="#111">FRD</text><text x="657" y="882.35" text-anchor="middle" font-size="12.4" font-weight="bold" fill="#111">Energy</text><text x="657" y="898.25" text-anchor="middle" font-size="12.4" font-weight="bold" fill="#111">Cost</text><text x="730.95" y="866.45" text-anchor="middle" font-size="12.4" font-weight="bold" fill="#111">Spin</text><text x="730.95" y="882.35" text-anchor="middle" font-size="12.4" font-weight="bold" fill="#111">Capacity</text><text x="730.95" y="898.25" text-anchor="middle" font-size="12.4" font-weight="bold" fill="#111">Revenue</text><text x="799.7" y="866.45" text-anchor="middle" font-size="12.4" font-weight="bold" fill="#111">Spin</text><text x="799.7" y="882.35" text-anchor="middle" font-size="12.4" font-weight="bold" fill="#111">Energy</text><text x="799.7" y="898.25" text-anchor="middle" font-size="12.4" font-weight="bold" fill="#111">Revenue</text><text x="868.45" y="866.45" text-anchor="middle" font-size="12.4" font-weight="bold" fill="#111">ECRS</text><text x="868.45" y="882.35" text-anchor="middle" font-size="12.4" font-weight="bold" fill="#111">Capacity</text><text x="868.45" y="898.25" text-anchor="middle" font-size="12.4" font-weight="bold" fill="#111">Revenue</text><text x="940.05" y="866.45" text-anchor="middle" font-size="12.4" font-weight="bold" fill="#111">ECRS</text><text x="940.05" y="882.35" text-anchor="middle" font-size="12.4" font-weight="bold" fill="#111">Energy</text><text x="940.05" y="898.25" text-anchor="middle" font-size="12.4" font-weight="bold" fill="#111">Revenue</text><text x="1015.9" y="882.35" text-anchor="middle" font-size="12.4" font-weight="bold" fill="#111">DA TB2</text><text x="1095.55" y="882.35" text-anchor="middle" font-size="12.4" font-weight="bold" fill="#111">DA TB4</text><text x="1174.85" y="882.35" text-anchor="middle" font-size="12.4" font-weight="bold" fill="#111">RT TB2</text><text x="1254.2" y="882.35" text-anchor="middle" font-size="12.4" font-weight="bold" fill="#111">RT TB4</text><text x="1328.45" y="866.45" text-anchor="middle" font-size="12.4" font-weight="bold" fill="#111">Total</text><text x="1328.45" y="882.35" text-anchor="middle" font-size="12.4" font-weight="bold" fill="#111">Discharge</text><text x="1328.45" y="898.25" text-anchor="middle" font-size="12.4" font-weight="bold" fill="#111">Energy</text><text x="1399.05" y="874.4" text-anchor="middle" font-size="12.4" font-weight="bold" fill="#111">DA Energy</text><text x="1399.05" y="890.3" text-anchor="middle" font-size="12.4" font-weight="bold" fill="#111">Arbitrage</text><text x="1471.1" y="874.4" text-anchor="middle" font-size="12.4" font-weight="bold" fill="#111">RT Energy</text><text x="1471.1" y="890.3" text-anchor="middle" font-size="12.4" font-weight="bold" fill="#111">Arbitrage</text><text x="1542.7" y="882.35" text-anchor="middle" font-size="12.4" font-weight="bold" fill="#111">FRU</text><text x="1616.85" y="882.35" text-anchor="middle" font-size="12.4" font-weight="bold" fill="#111">FRD</text><text x="1690.9" y="882.35" text-anchor="middle" font-size="12.4" font-weight="bold" fill="#111">Spin</text><text x="1763.9" y="882.35" text-anchor="middle" font-size="12.4" font-weight="bold" fill="#111">Non-spin</text><text x="1840.85" y="874.4" text-anchor="middle" font-size="12.4" font-weight="bold" fill="#111">Total</text><text x="1840.85" y="890.3" text-anchor="middle" font-size="12.4" font-weight="bold" fill="#111">Revenue</text><text x="1917.7" y="866.45" text-anchor="middle" font-size="12.4" font-weight="bold" fill="#111">Total</text><text x="1917.7" y="882.35" text-anchor="middle" font-size="12.4" font-weight="bold" fill="#111">Revenue</text><text x="1917.7" y="898.25" text-anchor="middle" font-size="12.4" font-weight="bold" fill="#111">($/kW)</text><text x="1992.15" y="866.45" text-anchor="middle" font-size="12.4" font-weight="bold" fill="#111">Total</text><text x="1992.15" y="882.35" text-anchor="middle" font-size="12.4" font-weight="bold" fill="#111">Revenue</text><text x="1992.15" y="898.25" text-anchor="middle" font-size="12.4" font-weight="bold" fill="#111">($/kW-mo)</text><text x="32.8" y="916" font-size="12.4" fill="#111">2020</text><text x="145.45" y="916" text-anchor="middle" font-size="12.4" fill="#111">$7,243,304</text><text x="219.55" y="916" text-anchor="middle" font-size="12.4" fill="#111">$2,201,105</text><text x="295.15" y="916" text-anchor="middle" font-size="12.4" fill="#111">-$476,662</text><text x="371.7" y="916" text-anchor="middle" font-size="12.4" fill="#111">-$1,766,259</text><text x="445.6" y="916" text-anchor="middle" font-size="12.4" fill="#111">$1,285,483</text><text x="517.25" y="916" text-anchor="middle" font-size="12.4" fill="#111">$1,066,594</text><text x="585.9" y="916" text-anchor="middle" font-size="12.4" fill="#111">########</text><text x="657" y="916" text-anchor="middle" font-size="12.4" fill="#111">-$3,286,169</text><text x="730.95" y="916" text-anchor="middle" font-size="12.4" fill="#111">$407,285</text><text x="799.7" y="916" text-anchor="middle" font-size="12.4" fill="#111">$48,898</text><text x="868.45" y="916" text-anchor="middle" font-size="12.4" fill="#111">$4,021</text><text x="940.05" y="916" text-anchor="middle" font-size="12.4" fill="#111">$3,301,893</text><text x="1015.9" y="916" text-anchor="middle" font-size="12.4" fill="#111">$4,481,517</text><text x="1095.55" y="916" text-anchor="middle" font-size="12.4" fill="#111">$8,057,352</text><text x="1174.85" y="916" text-anchor="middle" font-size="12.4" fill="#111">$5,721,311</text><text x="1254.2" y="916" text-anchor="middle" font-size="12.4" fill="#111">$9,340,601</text><text x="1328.45" y="916" text-anchor="middle" font-size="12.4" fill="#111">146,000</text><text x="1399.05" y="916" text-anchor="middle" font-size="12.4" fill="#111">$6,766,643</text><text x="1471.1" y="916" text-anchor="middle" font-size="12.4" fill="#111">$434,845</text><text x="1542.7" y="916" text-anchor="middle" font-size="12.4" fill="#111">$2,352,076</text><text x="1616.85" y="916" text-anchor="middle" font-size="12.4" fill="#111">-$458,890</text><text x="1690.9" y="916" text-anchor="middle" font-size="12.4" fill="#111">$456,183</text><text x="1763.9" y="916" text-anchor="middle" font-size="12.4" fill="#111">$3,305,913</text><text x="1840.85" y="916" text-anchor="middle" font-size="12.4" fill="#111">$12,856,770</text><text x="1917.7" y="916" text-anchor="middle" font-size="12.4" fill="#111">$129</text><text x="1992.15" y="916" text-anchor="middle" font-size="12.4" fill="#111">$10.7</text><text x="32.8" y="933.94" font-size="12.4" fill="#111">2021</text><text x="145.45" y="933.94" text-anchor="middle" font-size="12.4" fill="#111">$6,817,937</text><text x="219.55" y="933.94" text-anchor="middle" font-size="12.4" fill="#111">$2,408,470</text><text x="295.15" y="933.94" text-anchor="middle" font-size="12.4" fill="#111">-$479,334</text><text x="371.7" y="933.94" text-anchor="middle" font-size="12.4" fill="#111">-$1,663,228</text><text x="445.6" y="933.94" text-anchor="middle" font-size="12.4" fill="#111">$1,227,855</text><text x="517.25" y="933.94" text-anchor="middle" font-size="12.4" fill="#111">$1,074,003</text><text x="585.9" y="933.94" text-anchor="middle" font-size="12.4" fill="#111">########</text><text x="657" y="933.94" text-anchor="middle" font-size="12.4" fill="#111">-$2,653,691</text><text x="730.95" y="933.94" text-anchor="middle" font-size="12.4" fill="#111">$488,764</text><text x="799.7" y="933.94" text-anchor="middle" font-size="12.4" fill="#111">$63,447</text><text x="868.45" y="933.94" text-anchor="middle" font-size="12.4" fill="#111">$3,556</text><text x="940.05" y="933.94" text-anchor="middle" font-size="12.4" fill="#111">$3,078,941</text><text x="1015.9" y="933.94" text-anchor="middle" font-size="12.4" fill="#111">$4,494,362</text><text x="1095.55" y="933.94" text-anchor="middle" font-size="12.4" fill="#111">$8,337,539</text><text x="1174.85" y="933.94" text-anchor="middle" font-size="12.4" fill="#111">$5,766,378</text><text x="1254.2" y="933.94" text-anchor="middle" font-size="12.4" fill="#111">$9,629,899</text><text x="1328.45" y="933.94" text-anchor="middle" font-size="12.4" fill="#111">140,452</text><text x="1399.05" y="933.94" text-anchor="middle" font-size="12.4" fill="#111">$6,338,603</text><text x="1471.1" y="933.94" text-anchor="middle" font-size="12.4" fill="#111">$745,242</text><text x="1542.7" y="933.94" text-anchor="middle" font-size="12.4" fill="#111">$2,301,857</text><text x="1616.85" y="933.94" text-anchor="middle" font-size="12.4" fill="#111">-$668,719</text><text x="1690.9" y="933.94" text-anchor="middle" font-size="12.4" fill="#111">$552,212</text><text x="1763.9" y="933.94" text-anchor="middle" font-size="12.4" fill="#111">$3,082,497</text><text x="1840.85" y="933.94" text-anchor="middle" font-size="12.4" fill="#111">$12,351,693</text><text x="1917.7" y="933.94" text-anchor="middle" font-size="12.4" fill="#111">$124</text><text x="1992.15" y="933.94" text-anchor="middle" font-size="12.4" fill="#111">$10.3</text><text x="32.8" y="951.88" font-size="12.4" fill="#111">2022</text><text x="145.45" y="951.88" text-anchor="middle" font-size="12.4" fill="#111">$6,754,339</text><text x="219.55" y="951.88" text-anchor="middle" font-size="12.4" fill="#111">$2,364,446</text><text x="295.15" y="951.88" text-anchor="middle" font-size="12.4" fill="#111">-$618,001</text><text x="371.7" y="951.88" text-anchor="middle" font-size="12.4" fill="#111">-$1,854,278</text><text x="445.6" y="951.88" text-anchor="middle" font-size="12.4" fill="#111">$1,541,907</text><text x="517.25" y="951.88" text-anchor="middle" font-size="12.4" fill="#111">$1,307,905</text><text x="585.9" y="951.88" text-anchor="middle" font-size="12.4" fill="#111">########</text><text x="657" y="951.88" text-anchor="middle" font-size="12.4" fill="#111">-$2,350,770</text><text x="730.95" y="951.88" text-anchor="middle" font-size="12.4" fill="#111">$533,403</text><text x="799.7" y="951.88" text-anchor="middle" font-size="12.4" fill="#111">$76,702</text><text x="868.45" y="951.88" text-anchor="middle" font-size="12.4" fill="#111">$3,468</text><text x="940.05" y="951.88" text-anchor="middle" font-size="12.4" fill="#111">$3,167,190</text><text x="1015.9" y="951.88" text-anchor="middle" font-size="12.4" fill="#111">$4,535,454</text><text x="1095.55" y="951.88" text-anchor="middle" font-size="12.4" fill="#111">$8,675,770</text><text x="1174.85" y="951.88" text-anchor="middle" font-size="12.4" fill="#111">$5,856,670</text><text x="1254.2" y="951.88" text-anchor="middle" font-size="12.4" fill="#111">$10,025,546</text><text x="1328.45" y="951.88" text-anchor="middle" font-size="12.4" fill="#111">137,420</text><text x="1399.05" y="951.88" text-anchor="middle" font-size="12.4" fill="#111">$6,136,338</text><text x="1471.1" y="951.88" text-anchor="middle" font-size="12.4" fill="#111">$510,168</text><text x="1542.7" y="951.88" text-anchor="middle" font-size="12.4" fill="#111">$2,849,812</text><text x="1616.85" y="951.88" text-anchor="middle" font-size="12.4" fill="#111">-$820,816</text><text x="1690.9" y="951.88" text-anchor="middle" font-size="12.4" fill="#111">$610,104</text><text x="1763.9" y="951.88" text-anchor="middle" font-size="12.4" fill="#111">$3,170,658</text><text x="1840.85" y="951.88" text-anchor="middle" font-size="12.4" fill="#111">$12,456,263</text><text x="1917.7" y="951.88" text-anchor="middle" font-size="12.4" fill="#111">$125</text><text x="1992.15" y="951.88" text-anchor="middle" font-size="12.4" fill="#111">$10.4</text><text x="32.8" y="969.82" font-size="12.4" fill="#111">2023</text><text x="145.45" y="969.82" text-anchor="middle" font-size="12.4" fill="#111">$6,477,060</text><text x="219.55" y="969.82" text-anchor="middle" font-size="12.4" fill="#111">$2,280,723</text><text x="295.15" y="969.82" text-anchor="middle" font-size="12.4" fill="#111">-$777,571</text><text x="371.7" y="969.82" text-anchor="middle" font-size="12.4" fill="#111">-$1,890,676</text><text x="445.6" y="969.82" text-anchor="middle" font-size="12.4" fill="#111">$1,207,722</text><text x="517.25" y="969.82" text-anchor="middle" font-size="12.4" fill="#111">$1,073,134</text><text x="585.9" y="969.82" text-anchor="middle" font-size="12.4" fill="#111">$391,303</text><text x="657" y="969.82" text-anchor="middle" font-size="12.4" fill="#111">-$829,762</text><text x="730.95" y="969.82" text-anchor="middle" font-size="12.4" fill="#111">$824,077</text><text x="799.7" y="969.82" text-anchor="middle" font-size="12.4" fill="#111">$107,919</text><text x="868.45" y="969.82" text-anchor="middle" font-size="12.4" fill="#111">$3,812</text><text x="940.05" y="969.82" text-anchor="middle" font-size="12.4" fill="#111">$3,457,281</text><text x="1015.9" y="969.82" text-anchor="middle" font-size="12.4" fill="#111">$4,806,204</text><text x="1095.55" y="969.82" text-anchor="middle" font-size="12.4" fill="#111">$9,106,887</text><text x="1174.85" y="969.82" text-anchor="middle" font-size="12.4" fill="#111">$6,201,255</text><text x="1254.2" y="969.82" text-anchor="middle" font-size="12.4" fill="#111">$10,617,520</text><text x="1328.45" y="969.82" text-anchor="middle" font-size="12.4" fill="#111">134,929</text><text x="1399.05" y="969.82" text-anchor="middle" font-size="12.4" fill="#111">$5,699,489</text><text x="1471.1" y="969.82" text-anchor="middle" font-size="12.4" fill="#111">$390,047</text><text x="1542.7" y="969.82" text-anchor="middle" font-size="12.4" fill="#111">$2,280,856</text><text x="1616.85" y="969.82" text-anchor="middle" font-size="12.4" fill="#111">-$438,459</text><text x="1690.9" y="969.82" text-anchor="middle" font-size="12.4" fill="#111">$931,995</text><text x="1763.9" y="969.82" text-anchor="middle" font-size="12.4" fill="#111">$3,461,093</text><text x="1840.85" y="969.82" text-anchor="middle" font-size="12.4" fill="#111">$12,325,020</text><text x="1917.7" y="969.82" text-anchor="middle" font-size="12.4" fill="#111">$123</text><text x="1992.15" y="969.82" text-anchor="middle" font-size="12.4" fill="#111">$10.3</text><text x="32.8" y="987.76" font-size="12.4" fill="#111">2024</text><text x="145.45" y="987.76" text-anchor="middle" font-size="12.4" fill="#111">$6,925,313</text><text x="219.55" y="987.76" text-anchor="middle" font-size="12.4" fill="#111">$2,203,261</text><text x="295.15" y="987.76" text-anchor="middle" font-size="12.4" fill="#111">-$566,649</text><text x="371.7" y="987.76" text-anchor="middle" font-size="12.4" fill="#111">-$1,377,135</text><text x="445.6" y="987.76" text-anchor="middle" font-size="12.4" fill="#111">$1,342,280</text><text x="517.25" y="987.76" text-anchor="middle" font-size="12.4" fill="#111">$995,365</text><text x="585.9" y="987.76" text-anchor="middle" font-size="12.4" fill="#111">$348,489</text><text x="657" y="987.76" text-anchor="middle" font-size="12.4" fill="#111">-$650,229</text><text x="730.95" y="987.76" text-anchor="middle" font-size="12.4" fill="#111">$830,990</text><text x="799.7" y="987.76" text-anchor="middle" font-size="12.4" fill="#111">$106,066</text><text x="868.45" y="987.76" text-anchor="middle" font-size="12.4" fill="#111">$3,597</text><text x="940.05" y="987.76" text-anchor="middle" font-size="12.4" fill="#111">$3,273,427</text><text x="1015.9" y="987.76" text-anchor="middle" font-size="12.4" fill="#111">$5,502,183</text><text x="1095.55" y="987.76" text-anchor="middle" font-size="12.4" fill="#111">$10,166,095</text><text x="1174.85" y="987.76" text-anchor="middle" font-size="12.4" fill="#111">$6,917,981</text><text x="1254.2" y="987.76" text-anchor="middle" font-size="12.4" fill="#111">$11,680,386</text><text x="1328.45" y="987.76" text-anchor="middle" font-size="12.4" fill="#111">132,725</text><text x="1399.05" y="987.76" text-anchor="middle" font-size="12.4" fill="#111">$6,358,664</text><text x="1471.1" y="987.76" text-anchor="middle" font-size="12.4" fill="#111">$826,126</text><text x="1542.7" y="987.76" text-anchor="middle" font-size="12.4" fill="#111">$2,337,645</text><text x="1616.85" y="987.76" text-anchor="middle" font-size="12.4" fill="#111">-$301,740</text><text x="1690.9" y="987.76" text-anchor="middle" font-size="12.4" fill="#111">$937,056</text><text x="1763.9" y="987.76" text-anchor="middle" font-size="12.4" fill="#111">$3,277,024</text><text x="1840.85" y="987.76" text-anchor="middle" font-size="12.4" fill="#111">$13,434,776</text><text x="1917.7" y="987.76" text-anchor="middle" font-size="12.4" fill="#111">$134</text><text x="1992.15" y="987.76" text-anchor="middle" font-size="12.4" fill="#111">$11.2</text><text x="32.8" y="1005.7" font-size="12.4" fill="#111">2025</text><text x="145.45" y="1005.7" text-anchor="middle" font-size="12.4" fill="#111">$7,169,060</text><text x="219.55" y="1005.7" text-anchor="middle" font-size="12.4" fill="#111">$2,827,675</text><text x="295.15" y="1005.7" text-anchor="middle" font-size="12.4" fill="#111">-$502,549</text><text x="371.7" y="1005.7" text-anchor="middle" font-size="12.4" fill="#111">-$1,085,524</text><text x="445.6" y="1005.7" text-anchor="middle" font-size="12.4" fill="#111">$50,183</text><text x="517.25" y="1005.7" text-anchor="middle" font-size="12.4" fill="#111">$34,521</text><text x="585.9" y="1005.7" text-anchor="middle" font-size="12.4" fill="#111">$125,625</text><text x="657" y="1005.7" text-anchor="middle" font-size="12.4" fill="#111">-$289,352</text><text x="730.95" y="1005.7" text-anchor="middle" font-size="12.4" fill="#111">$1,925,110</text><text x="799.7" y="1005.7" text-anchor="middle" font-size="12.4" fill="#111">$160,070</text><text x="868.45" y="1005.7" text-anchor="middle" font-size="12.4" fill="#111">$3,784</text><text x="940.05" y="1005.7" text-anchor="middle" font-size="12.4" fill="#111">$3,426,293</text><text x="1015.9" y="1005.7" text-anchor="middle" font-size="12.4" fill="#111">$5,947,436</text><text x="1095.55" y="1005.7" text-anchor="middle" font-size="12.4" fill="#111">$11,111,150</text><text x="1174.85" y="1005.7" text-anchor="middle" font-size="12.4" fill="#111">$7,317,564</text><text x="1254.2" y="1005.7" text-anchor="middle" font-size="12.4" fill="#111">$12,524,991</text><text x="1328.45" y="1005.7" text-anchor="middle" font-size="12.4" fill="#111">130,714</text><text x="1399.05" y="1005.7" text-anchor="middle" font-size="12.4" fill="#111">$6,666,511</text><text x="1471.1" y="1005.7" text-anchor="middle" font-size="12.4" fill="#111">$1,742,152</text><text x="1542.7" y="1005.7" text-anchor="middle" font-size="12.4" fill="#111">$84,704</text><text x="1616.85" y="1005.7" text-anchor="middle" font-size="12.4" fill="#111">-$163,727</text><text x="1690.9" y="1005.7" text-anchor="middle" font-size="12.4" fill="#111">$2,085,180</text><text x="1763.9" y="1005.7" text-anchor="middle" font-size="12.4" fill="#111">$3,430,077</text><text x="1840.85" y="1005.7" text-anchor="middle" font-size="12.4" fill="#111">$13,844,897</text><text x="1917.7" y="1005.7" text-anchor="middle" font-size="12.4" fill="#111">$138</text><text x="1992.15" y="1005.7" text-anchor="middle" font-size="12.4" fill="#111">$11.5</text><text x="32.8" y="1023.64" font-size="12.4" fill="#111">2026</text><text x="145.45" y="1023.64" text-anchor="middle" font-size="12.4" fill="#111">$6,891,440</text><text x="219.55" y="1023.64" text-anchor="middle" font-size="12.4" fill="#111">$2,155,147</text><text x="295.15" y="1023.64" text-anchor="middle" font-size="12.4" fill="#111">-$493,913</text><text x="371.7" y="1023.64" text-anchor="middle" font-size="12.4" fill="#111">-$899,809</text><text x="445.6" y="1023.64" text-anchor="middle" font-size="12.4" fill="#111">$1,454,374</text><text x="517.25" y="1023.64" text-anchor="middle" font-size="12.4" fill="#111">$1,175,899</text><text x="585.9" y="1023.64" text-anchor="middle" font-size="12.4" fill="#111">$58,925</text><text x="657" y="1023.64" text-anchor="middle" font-size="12.4" fill="#111">-$144,519</text><text x="730.95" y="1023.64" text-anchor="middle" font-size="12.4" fill="#111">$916,842</text><text x="799.7" y="1023.64" text-anchor="middle" font-size="12.4" fill="#111">$120,764</text><text x="868.45" y="1023.64" text-anchor="middle" font-size="12.4" fill="#111">$3,317</text><text x="940.05" y="1023.64" text-anchor="middle" font-size="12.4" fill="#111">$3,083,285</text><text x="1015.9" y="1023.64" text-anchor="middle" font-size="12.4" fill="#111">$6,061,652</text><text x="1095.55" y="1023.64" text-anchor="middle" font-size="12.4" fill="#111">$11,551,290</text><text x="1174.85" y="1023.64" text-anchor="middle" font-size="12.4" fill="#111">$7,416,922</text><text x="1254.2" y="1023.64" text-anchor="middle" font-size="12.4" fill="#111">$12,938,605</text><text x="1328.45" y="1023.64" text-anchor="middle" font-size="12.4" fill="#111">128,852</text><text x="1399.05" y="1023.64" text-anchor="middle" font-size="12.4" fill="#111">$6,397,526</text><text x="1471.1" y="1023.64" text-anchor="middle" font-size="12.4" fill="#111">$1,255,338</text><text x="1542.7" y="1023.64" text-anchor="middle" font-size="12.4" fill="#111">$2,630,273</text><text x="1616.85" y="1023.64" text-anchor="middle" font-size="12.4" fill="#111">-$85,594</text><text x="1690.9" y="1023.64" text-anchor="middle" font-size="12.4" fill="#111">$1,037,605</text><text x="1763.9" y="1023.64" text-anchor="middle" font-size="12.4" fill="#111">$3,086,603</text><text x="1840.85" y="1023.64" text-anchor="middle" font-size="12.4" fill="#111">$14,321,753</text><text x="1917.7" y="1023.64" text-anchor="middle" font-size="12.4" fill="#111">$143</text><text x="1992.15" y="1023.64" text-anchor="middle" font-size="12.4" fill="#111">$11.9</text><text x="32.8" y="1041.58" font-size="12.4" fill="#111">2027</text><text x="145.45" y="1041.58" text-anchor="middle" font-size="12.4" fill="#111">$6,275,365</text><text x="219.55" y="1041.58" text-anchor="middle" font-size="12.4" fill="#111">$2,665,324</text><text x="295.15" y="1041.58" text-anchor="middle" font-size="12.4" fill="#111">-$82,980</text><text x="371.7" y="1041.58" text-anchor="middle" font-size="12.4" fill="#111">$416,131</text><text x="445.6" y="1041.58" text-anchor="middle" font-size="12.4" fill="#111">$1,815,270</text><text x="517.25" y="1041.58" text-anchor="middle" font-size="12.4" fill="#111">$1,488,690</text><text x="585.9" y="1041.58" text-anchor="middle" font-size="12.4" fill="#111">$42,752</text><text x="657" y="1041.58" text-anchor="middle" font-size="12.4" fill="#111">-$48,645</text><text x="730.95" y="1041.58" text-anchor="middle" font-size="12.4" fill="#111">$1,006,533</text><text x="799.7" y="1041.58" text-anchor="middle" font-size="12.4" fill="#111">$109,493</text><text x="868.45" y="1041.58" text-anchor="middle" font-size="12.4" fill="#111">$2,978</text><text x="940.05" y="1041.58" text-anchor="middle" font-size="12.4" fill="#111">$2,992,158</text><text x="1015.9" y="1041.58" text-anchor="middle" font-size="12.4" fill="#111">$7,303,111</text><text x="1095.55" y="1041.58" text-anchor="middle" font-size="12.4" fill="#111">$13,957,021</text><text x="1174.85" y="1041.58" text-anchor="middle" font-size="12.4" fill="#111">$8,655,822</text><text x="1254.2" y="1041.58" text-anchor="middle" font-size="12.4" fill="#111">$15,309,226</text><text x="1328.45" y="1041.58" text-anchor="middle" font-size="12.4" fill="#111">127,080</text><text x="1399.05" y="1041.58" text-anchor="middle" font-size="12.4" fill="#111">$6,192,385</text><text x="1471.1" y="1041.58" text-anchor="middle" font-size="12.4" fill="#111">$3,081,455</text><text x="1542.7" y="1041.58" text-anchor="middle" font-size="12.4" fill="#111">$3,303,961</text><text x="1616.85" y="1041.58" text-anchor="middle" font-size="12.4" fill="#111">-$5,893</text><text x="1690.9" y="1041.58" text-anchor="middle" font-size="12.4" fill="#111">$1,116,025</text><text x="1763.9" y="1041.58" text-anchor="middle" font-size="12.4" fill="#111">$2,995,136</text><text x="1840.85" y="1041.58" text-anchor="middle" font-size="12.4" fill="#111">$16,683,068</text><text x="1917.7" y="1041.58" text-anchor="middle" font-size="12.4" fill="#111">$167</text><text x="1992.15" y="1041.58" text-anchor="middle" font-size="12.4" fill="#111">$13.9</text><text x="32.8" y="1059.52" font-size="12.4" fill="#111">2028</text><text x="145.45" y="1059.52" text-anchor="middle" font-size="12.4" fill="#111">$6,513,202</text><text x="219.55" y="1059.52" text-anchor="middle" font-size="12.4" fill="#111">$2,213,061</text><text x="295.15" y="1059.52" text-anchor="middle" font-size="12.4" fill="#111">$75,803</text><text x="371.7" y="1059.52" text-anchor="middle" font-size="12.4" fill="#111">$764,486</text><text x="445.6" y="1059.52" text-anchor="middle" font-size="12.4" fill="#111">$1,759,530</text><text x="517.25" y="1059.52" text-anchor="middle" font-size="12.4" fill="#111">$1,500,116</text><text x="585.9" y="1059.52" text-anchor="middle" font-size="12.4" fill="#111">$31,825</text><text x="657" y="1059.52" text-anchor="middle" font-size="12.4" fill="#111">-$17,026</text><text x="730.95" y="1059.52" text-anchor="middle" font-size="12.4" fill="#111">$1,030,043</text><text x="799.7" y="1059.52" text-anchor="middle" font-size="12.4" fill="#111">$110,137</text><text x="868.45" y="1059.52" text-anchor="middle" font-size="12.4" fill="#111">$3,105</text><text x="940.05" y="1059.52" text-anchor="middle" font-size="12.4" fill="#111">$3,198,480</text><text x="1015.9" y="1059.52" text-anchor="middle" font-size="12.4" fill="#111">$7,811,916</text><text x="1095.55" y="1059.52" text-anchor="middle" font-size="12.4" fill="#111">$14,838,557</text><text x="1174.85" y="1059.52" text-anchor="middle" font-size="12.4" fill="#111">$9,128,211</text><text x="1254.2" y="1059.52" text-anchor="middle" font-size="12.4" fill="#111">$16,171,155</text><text x="1328.45" y="1059.52" text-anchor="middle" font-size="12.4" fill="#111">125,410</text><text x="1399.05" y="1059.52" text-anchor="middle" font-size="12.4" fill="#111">$6,589,004</text><text x="1471.1" y="1059.52" text-anchor="middle" font-size="12.4" fill="#111">$2,977,547</text><text x="1542.7" y="1059.52" text-anchor="middle" font-size="12.4" fill="#111">$3,259,646</text><text x="1616.85" y="1059.52" text-anchor="middle" font-size="12.4" fill="#111">$14,799</text><text x="1690.9" y="1059.52" text-anchor="middle" font-size="12.4" fill="#111">$1,140,179</text><text x="1763.9" y="1059.52" text-anchor="middle" font-size="12.4" fill="#111">$3,201,585</text><text x="1840.85" y="1059.52" text-anchor="middle" font-size="12.4" fill="#111">$17,182,761</text><text x="1917.7" y="1059.52" text-anchor="middle" font-size="12.4" fill="#111">$172</text><text x="1992.15" y="1059.52" text-anchor="middle" font-size="12.4" fill="#111">$14.3</text><text x="32.8" y="1077.46" font-size="12.4" fill="#111">2029</text><text x="145.45" y="1077.46" text-anchor="middle" font-size="12.4" fill="#111">$6,780,630</text><text x="219.55" y="1077.46" text-anchor="middle" font-size="12.4" fill="#111">$2,443,351</text><text x="295.15" y="1077.46" text-anchor="middle" font-size="12.4" fill="#111">$57,599</text><text x="371.7" y="1077.46" text-anchor="middle" font-size="12.4" fill="#111">$666,345</text><text x="445.6" y="1077.46" text-anchor="middle" font-size="12.4" fill="#111">$1,618,357</text><text x="517.25" y="1077.46" text-anchor="middle" font-size="12.4" fill="#111">$1,489,499</text><text x="585.9" y="1077.46" text-anchor="middle" font-size="12.4" fill="#111">$33,236</text><text x="657" y="1077.46" text-anchor="middle" font-size="12.4" fill="#111">-$22,840</text><text x="730.95" y="1077.46" text-anchor="middle" font-size="12.4" fill="#111">$1,260,569</text><text x="799.7" y="1077.46" text-anchor="middle" font-size="12.4" fill="#111">$130,232</text><text x="868.45" y="1077.46" text-anchor="middle" font-size="12.4" fill="#111">$2,857</text><text x="940.05" y="1077.46" text-anchor="middle" font-size="12.4" fill="#111">$3,021,979</text><text x="1015.9" y="1077.46" text-anchor="middle" font-size="12.4" fill="#111">$7,921,360</text><text x="1095.55" y="1077.46" text-anchor="middle" font-size="12.4" fill="#111">$15,143,853</text><text x="1174.85" y="1077.46" text-anchor="middle" font-size="12.4" fill="#111">$9,298,334</text><text x="1254.2" y="1077.46" text-anchor="middle" font-size="12.4" fill="#111">$16,494,136</text><text x="1328.45" y="1077.46" text-anchor="middle" font-size="12.4" fill="#111">123,808</text><text x="1399.05" y="1077.46" text-anchor="middle" font-size="12.4" fill="#111">$6,838,229</text><text x="1471.1" y="1077.46" text-anchor="middle" font-size="12.4" fill="#111">$3,109,696</text><text x="1542.7" y="1077.46" text-anchor="middle" font-size="12.4" fill="#111">$3,107,856</text><text x="1616.85" y="1077.46" text-anchor="middle" font-size="12.4" fill="#111">$10,395</text><text x="1690.9" y="1077.46" text-anchor="middle" font-size="12.4" fill="#111">$1,390,801</text><text x="1763.9" y="1077.46" text-anchor="middle" font-size="12.4" fill="#111">$3,024,836</text><text x="1840.85" y="1077.46" text-anchor="middle" font-size="12.4" fill="#111">$17,481,812</text><text x="1917.7" y="1077.46" text-anchor="middle" font-size="12.4" fill="#111">$175</text><text x="1992.15" y="1077.46" text-anchor="middle" font-size="12.4" fill="#111">$14.6</text><text x="32.8" y="1095.4" font-size="12.4" fill="#111">2030</text><text x="145.45" y="1095.4" text-anchor="middle" font-size="12.4" fill="#111">$6,848,168</text><text x="219.55" y="1095.4" text-anchor="middle" font-size="12.4" fill="#111">$2,288,045</text><text x="295.15" y="1095.4" text-anchor="middle" font-size="12.4" fill="#111">$50,040</text><text x="371.7" y="1095.4" text-anchor="middle" font-size="12.4" fill="#111">$835,458</text><text x="445.6" y="1095.4" text-anchor="middle" font-size="12.4" fill="#111">$1,990,431</text><text x="517.25" y="1095.4" text-anchor="middle" font-size="12.4" fill="#111">$1,656,638</text><text x="585.9" y="1095.4" text-anchor="middle" font-size="12.4" fill="#111">$35,594</text><text x="657" y="1095.4" text-anchor="middle" font-size="12.4" fill="#111">-$16,161</text><text x="730.95" y="1095.4" text-anchor="middle" font-size="12.4" fill="#111">$1,216,960</text><text x="799.7" y="1095.4" text-anchor="middle" font-size="12.4" fill="#111">$126,840</text><text x="868.45" y="1095.4" text-anchor="middle" font-size="12.4" fill="#111">$2,877</text><text x="940.05" y="1095.4" text-anchor="middle" font-size="12.4" fill="#111">$3,032,863</text><text x="1015.9" y="1095.4" text-anchor="middle" font-size="12.4" fill="#111">$8,413,411</text><text x="1095.55" y="1095.4" text-anchor="middle" font-size="12.4" fill="#111">$15,724,692</text><text x="1174.85" y="1095.4" text-anchor="middle" font-size="12.4" fill="#111">$9,803,487</text><text x="1254.2" y="1095.4" text-anchor="middle" font-size="12.4" fill="#111">$17,141,578</text><text x="1328.45" y="1095.4" text-anchor="middle" font-size="12.4" fill="#111">122,261</text><text x="1399.05" y="1095.4" text-anchor="middle" font-size="12.4" fill="#111">$6,898,208</text><text x="1471.1" y="1095.4" text-anchor="middle" font-size="12.4" fill="#111">$3,123,503</text><text x="1542.7" y="1095.4" text-anchor="middle" font-size="12.4" fill="#111">$3,647,069</text><text x="1616.85" y="1095.4" text-anchor="middle" font-size="12.4" fill="#111">$19,432</text><text x="1690.9" y="1095.4" text-anchor="middle" font-size="12.4" fill="#111">$1,343,799</text><text x="1763.9" y="1095.4" text-anchor="middle" font-size="12.4" fill="#111">$3,035,740</text><text x="1840.85" y="1095.4" text-anchor="middle" font-size="12.4" fill="#111">$18,067,752</text><text x="1917.7" y="1095.4" text-anchor="middle" font-size="12.4" fill="#111">$181</text><text x="1992.15" y="1095.4" text-anchor="middle" font-size="12.4" fill="#111">$15.1</text><text x="32.8" y="1113.34" font-size="12.4" fill="#111">2031</text><text x="145.45" y="1113.34" text-anchor="middle" font-size="12.4" fill="#111">$7,153,785</text><text x="219.55" y="1113.34" text-anchor="middle" font-size="12.4" fill="#111">$2,337,813</text><text x="295.15" y="1113.34" text-anchor="middle" font-size="12.4" fill="#111">$44,402</text><text x="371.7" y="1113.34" text-anchor="middle" font-size="12.4" fill="#111">$700,343</text><text x="445.6" y="1113.34" text-anchor="middle" font-size="12.4" fill="#111">$2,170,940</text><text x="517.25" y="1113.34" text-anchor="middle" font-size="12.4" fill="#111">$1,673,789</text><text x="585.9" y="1113.34" text-anchor="middle" font-size="12.4" fill="#111">$33,166</text><text x="657" y="1113.34" text-anchor="middle" font-size="12.4" fill="#111">-$17,061</text><text x="730.95" y="1113.34" text-anchor="middle" font-size="12.4" fill="#111">$1,188,712</text><text x="799.7" y="1113.34" text-anchor="middle" font-size="12.4" fill="#111">$125,786</text><text x="868.45" y="1113.34" text-anchor="middle" font-size="12.4" fill="#111">$2,896</text><text x="940.05" y="1113.34" text-anchor="middle" font-size="12.4" fill="#111">$3,213,119</text><text x="1015.9" y="1113.34" text-anchor="middle" font-size="12.4" fill="#111">$8,559,624</text><text x="1095.55" y="1113.34" text-anchor="middle" font-size="12.4" fill="#111">$16,333,030</text><text x="1174.85" y="1113.34" text-anchor="middle" font-size="12.4" fill="#111">$9,958,605</text><text x="1254.2" y="1113.34" text-anchor="middle" font-size="12.4" fill="#111">$17,718,401</text><text x="1328.45" y="1113.34" text-anchor="middle" font-size="12.4" fill="#111">120,771</text><text x="1399.05" y="1113.34" text-anchor="middle" font-size="12.4" fill="#111">$7,198,187</text><text x="1471.1" y="1113.34" text-anchor="middle" font-size="12.4" fill="#111">$3,038,156</text><text x="1542.7" y="1113.34" text-anchor="middle" font-size="12.4" fill="#111">$3,844,730</text><text x="1616.85" y="1113.34" text-anchor="middle" font-size="12.4" fill="#111">$16,105</text><text x="1690.9" y="1113.34" text-anchor="middle" font-size="12.4" fill="#111">$1,314,498</text><text x="1763.9" y="1113.34" text-anchor="middle" font-size="12.4" fill="#111">$3,216,015</text><text x="1840.85" y="1113.34" text-anchor="middle" font-size="12.4" fill="#111">$18,627,690</text><text x="1917.7" y="1113.34" text-anchor="middle" font-size="12.4" fill="#111">$186</text><text x="1992.15" y="1113.34" text-anchor="middle" font-size="12.4" fill="#111">$15.5</text><text x="32.8" y="1131.28" font-size="12.4" fill="#111">2032</text><text x="145.45" y="1131.28" text-anchor="middle" font-size="12.4" fill="#111">$7,503,375</text><text x="219.55" y="1131.28" text-anchor="middle" font-size="12.4" fill="#111">$2,268,574</text><text x="295.15" y="1131.28" text-anchor="middle" font-size="12.4" fill="#111">-$37,342</text><text x="371.7" y="1131.28" text-anchor="middle" font-size="12.4" fill="#111">$540,871</text><text x="445.6" y="1131.28" text-anchor="middle" font-size="12.4" fill="#111">$1,874,529</text><text x="517.25" y="1131.28" text-anchor="middle" font-size="12.4" fill="#111">$1,657,935</text><text x="585.9" y="1131.28" text-anchor="middle" font-size="12.4" fill="#111">$36,101</text><text x="657" y="1131.28" text-anchor="middle" font-size="12.4" fill="#111">-$27,030</text><text x="730.95" y="1131.28" text-anchor="middle" font-size="12.4" fill="#111">$1,185,646</text><text x="799.7" y="1131.28" text-anchor="middle" font-size="12.4" fill="#111">$129,382</text><text x="868.45" y="1131.28" text-anchor="middle" font-size="12.4" fill="#111">$2,983</text><text x="940.05" y="1131.28" text-anchor="middle" font-size="12.4" fill="#111">$3,219,731</text><text x="1015.9" y="1131.28" text-anchor="middle" font-size="12.4" fill="#111">$8,729,500</text><text x="1095.55" y="1131.28" text-anchor="middle" font-size="12.4" fill="#111">$16,393,031</text><text x="1174.85" y="1131.28" text-anchor="middle" font-size="12.4" fill="#111">$10,150,044</text><text x="1254.2" y="1131.28" text-anchor="middle" font-size="12.4" fill="#111">$17,809,449</text><text x="1328.45" y="1131.28" text-anchor="middle" font-size="12.4" fill="#111">119,325</text><text x="1399.05" y="1131.28" text-anchor="middle" font-size="12.4" fill="#111">$7,466,033</text><text x="1471.1" y="1131.28" text-anchor="middle" font-size="12.4" fill="#111">$2,809,445</text><text x="1542.7" y="1131.28" text-anchor="middle" font-size="12.4" fill="#111">$3,532,463</text><text x="1616.85" y="1131.28" text-anchor="middle" font-size="12.4" fill="#111">$9,071</text><text x="1690.9" y="1131.28" text-anchor="middle" font-size="12.4" fill="#111">$1,315,028</text><text x="1763.9" y="1131.28" text-anchor="middle" font-size="12.4" fill="#111">$3,222,714</text><text x="1840.85" y="1131.28" text-anchor="middle" font-size="12.4" fill="#111">$18,354,755</text><text x="1917.7" y="1131.28" text-anchor="middle" font-size="12.4" fill="#111">$184</text><text x="1992.15" y="1131.28" text-anchor="middle" font-size="12.4" fill="#111">$15.3</text><text x="32.8" y="1149.22" font-size="12.4" fill="#111">2033</text><text x="145.45" y="1149.22" text-anchor="middle" font-size="12.4" fill="#111">$7,072,927</text><text x="219.55" y="1149.22" text-anchor="middle" font-size="12.4" fill="#111">$2,350,330</text><text x="295.15" y="1149.22" text-anchor="middle" font-size="12.4" fill="#111">-$153,033</text><text x="371.7" y="1149.22" text-anchor="middle" font-size="12.4" fill="#111">$868,461</text><text x="445.6" y="1149.22" text-anchor="middle" font-size="12.4" fill="#111">$1,839,144</text><text x="517.25" y="1149.22" text-anchor="middle" font-size="12.4" fill="#111">$1,692,425</text><text x="585.9" y="1149.22" text-anchor="middle" font-size="12.4" fill="#111">$42,019</text><text x="657" y="1149.22" text-anchor="middle" font-size="12.4" fill="#111">-$15,212</text><text x="730.95" y="1149.22" text-anchor="middle" font-size="12.4" fill="#111">$1,323,343</text><text x="799.7" y="1149.22" text-anchor="middle" font-size="12.4" fill="#111">$130,233</text><text x="868.45" y="1149.22" text-anchor="middle" font-size="12.4" fill="#111">$2,944</text><text x="940.05" y="1149.22" text-anchor="middle" font-size="12.4" fill="#111">$3,340,894</text><text x="1015.9" y="1149.22" text-anchor="middle" font-size="12.4" fill="#111">$8,723,886</text><text x="1095.55" y="1149.22" text-anchor="middle" font-size="12.4" fill="#111">$16,850,720</text><text x="1174.85" y="1149.22" text-anchor="middle" font-size="12.4" fill="#111">$10,249,860</text><text x="1254.2" y="1149.22" text-anchor="middle" font-size="12.4" fill="#111">$18,364,240</text><text x="1328.45" y="1149.22" text-anchor="middle" font-size="12.4" fill="#111">117,324</text><text x="1399.05" y="1149.22" text-anchor="middle" font-size="12.4" fill="#111">$7,299,893</text><text x="1471.1" y="1149.22" text-anchor="middle" font-size="12.4" fill="#111">$2,461,157</text><text x="1542.7" y="1149.22" text-anchor="middle" font-size="12.4" fill="#111">$3,531,569</text><text x="1616.85" y="1149.22" text-anchor="middle" font-size="12.4" fill="#111">$27,206</text><text x="1690.9" y="1149.22" text-anchor="middle" font-size="12.4" fill="#111">$1,523,564</text><text x="1763.9" y="1149.22" text-anchor="middle" font-size="12.4" fill="#111">$3,343,838</text><text x="1840.85" y="1149.22" text-anchor="middle" font-size="12.4" fill="#111">$18,789,259</text><text x="1917.7" y="1149.22" text-anchor="middle" font-size="12.4" fill="#111">$188</text><text x="1992.15" y="1149.22" text-anchor="middle" font-size="12.4" fill="#111">$15.7</text></svg><div class="a" style="left:0;top:1141.9px;width:2048px;height:47.1px;background:#dcdcdf"></div><div class="a" style="left:0;top:0;width:2048px;height:3.5px;background:#8d8d91"></div><div class="a" style="left:0;top:0;width:3px;height:1189px;background:#77777b"></div><div class="a" style="left:2045.6px;top:0;width:2.4px;height:1189px;background:#8d8d91"></div><div class="a" style="left:0;top:1186.8px;width:2048px;height:2.2px;background:#8d8d91"></div></body></html>
